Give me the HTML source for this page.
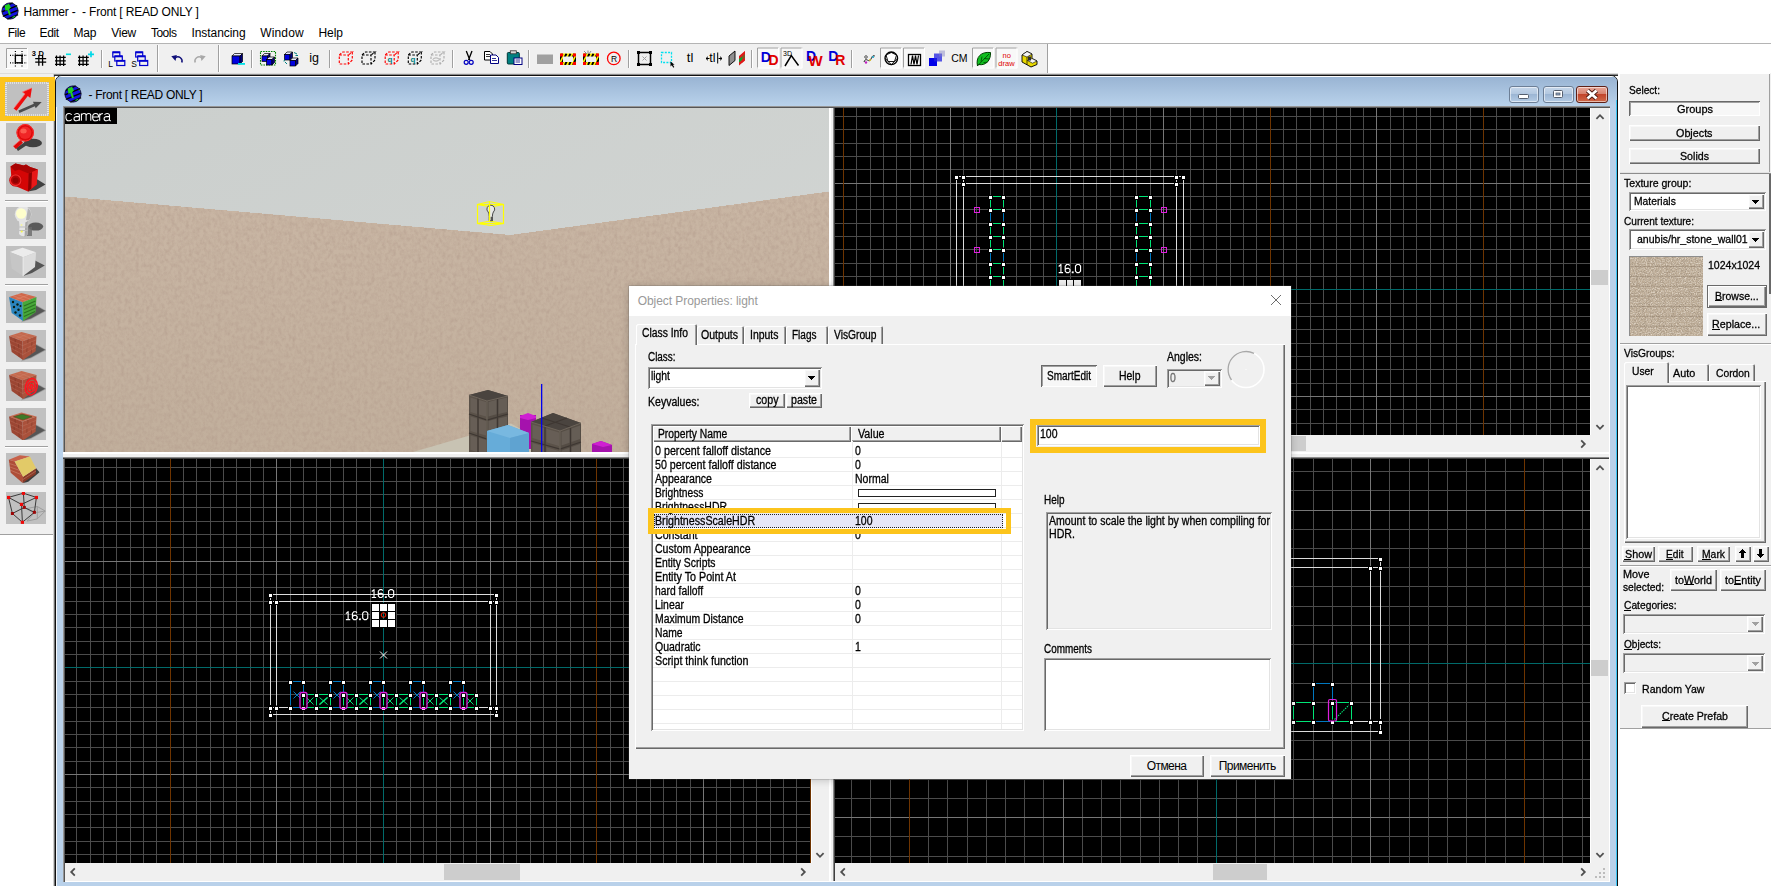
<!DOCTYPE html><html><head><meta charset="utf-8"><title>Hammer</title><style>
html,body{margin:0;padding:0}
body{width:1771px;height:886px;overflow:hidden;background:#fff;position:relative;font-family:"Liberation Sans",sans-serif;font-size:11px;color:#000}
.a{position:absolute;display:block}
.t{position:absolute;white-space:pre;font-family:"Liberation Sans",sans-serif}
.btn{background:#f0f0f0;box-shadow:inset 1px 1px 0 #fff, inset -1px -1px 0 #696969, inset -2px -2px 0 #a0a0a0, inset 2px 2px 0 #f8f8f8}
.btn.dflt{box-shadow:inset 0 0 0 1px #696969, inset 2px 2px 0 #fff, inset -2px -2px 0 #696969, inset -3px -3px 0 #a0a0a0}
.btnp{background:#f7f7f7;box-shadow:inset 1px 1px 0 #696969, inset -1px -1px 0 #fff, inset 2px 2px 0 #a0a0a0}
.sunk{box-shadow:inset 1px 1px 0 #a0a0a0, inset -1px -1px 0 #fff, inset 2px 2px 0 #696969, inset -2px -2px 0 #e3e3e3}
</style></head><body>
<svg class="a" style="left:1px;top:1.8px" width="18" height="18" viewBox="-10 -10 20 20">
<circle r="9" fill="#1414e0"/>
<path d="M-8 -4L3 -9 M-9 1L8 -6 M-8 6L9 -1 M-3 9L9 4" stroke="#000" stroke-width="1.6" fill="none"/>
<path d="M-6 -6L-1 -8L1 -4L-1 -2L1 4L-1 5L-3 -1L-5 0Z" fill="#20d020"/>
<path d="M2 7L6 5L5 8Z M6 -7L8 -4L7 -3Z" fill="#20d020"/>
<circle r="9" fill="none" stroke="#101030" stroke-width="1"/>
</svg>
<div class="t" style="left:23.6px;top:5px;font-size:12px;line-height:14px;color:#000;letter-spacing:-0.163px;">Hammer -  - Front [ READ ONLY ]</div>
<div class="t" style="left:7.7px;top:25.5px;font-size:12px;line-height:14px;color:#000;letter-spacing:-0.459px;">File</div>
<div class="t" style="left:39.5px;top:25.5px;font-size:12px;line-height:14px;color:#000;letter-spacing:-0.344px;">Edit</div>
<div class="t" style="left:73.5px;top:25.5px;font-size:12px;line-height:14px;color:#000;letter-spacing:-0.181px;">Map</div>
<div class="t" style="left:111.2px;top:25.5px;font-size:12px;line-height:14px;color:#000;letter-spacing:-0.248px;">View</div>
<div class="t" style="left:150.9px;top:25.5px;font-size:12px;line-height:14px;color:#000;letter-spacing:-0.502px;">Tools</div>
<div class="t" style="left:191.4px;top:25.5px;font-size:12px;line-height:14px;color:#000;letter-spacing:-0.050px;">Instancing</div>
<div class="t" style="left:260.2px;top:25.5px;font-size:12px;line-height:14px;color:#000;letter-spacing:0.170px;">Window</div>
<div class="t" style="left:318.5px;top:25.5px;font-size:12px;line-height:14px;color:#000;letter-spacing:-0.070px;">Help</div>
<div class="a" style="left:0px;top:43px;width:1771px;height:1px;background:#b4b4b4;"></div>
<div class="a" style="left:0px;top:44px;width:1047px;height:29px;background:#f0f0f0;"></div>
<div class="a" style="left:1047px;top:44px;width:1px;height:29px;background:#a0a0a0;"></div>
<div class="a" style="left:0px;top:73px;width:1771px;height:1px;background:#ffffff;"></div>
<svg class="a" style="left:0;top:44px" width="1048" height="29" viewBox="0 44 1048 29" font-family="Liberation Sans">
<rect x="101" y="50" width="1" height="18" fill="#a0a0a0"/><rect x="102" y="50" width="1" height="18" fill="#fff"/>
<rect x="157" y="45" width="1" height="27" fill="#a0a0a0"/><rect x="158" y="45" width="1" height="27" fill="#fff"/>
<rect x="218" y="45" width="1" height="27" fill="#a0a0a0"/><rect x="219" y="45" width="1" height="27" fill="#fff"/>
<rect x="251" y="50" width="1" height="18" fill="#a0a0a0"/><rect x="252" y="50" width="1" height="18" fill="#fff"/>
<rect x="329" y="50" width="1" height="18" fill="#a0a0a0"/><rect x="330" y="50" width="1" height="18" fill="#fff"/>
<rect x="452" y="50" width="1" height="18" fill="#a0a0a0"/><rect x="453" y="50" width="1" height="18" fill="#fff"/>
<rect x="528" y="50" width="1" height="18" fill="#a0a0a0"/><rect x="529" y="50" width="1" height="18" fill="#fff"/>
<rect x="628" y="50" width="1" height="18" fill="#a0a0a0"/><rect x="629" y="50" width="1" height="18" fill="#fff"/>
<rect x="751" y="50" width="1" height="18" fill="#a0a0a0"/><rect x="752" y="50" width="1" height="18" fill="#fff"/>
<rect x="851" y="50" width="1" height="18" fill="#a0a0a0"/><rect x="852" y="50" width="1" height="18" fill="#fff"/>
<rect x="6" y="48" width="22" height="21" fill="#f8f8f8"/><path d="M6.5 69V48.5H28" stroke="#a0a0a0" fill="none"/><path d="M27.5 48V68.5H6" stroke="#fff" fill="none"/>
<path d="M15.4 51V67M22 51V67M10 55.4H27M10 62.800H27" stroke="#000" stroke-width="1.2" stroke-dasharray="1 1.4" fill="none"/><rect x="15.4" y="55.4" width="6.600" height="7.400" fill="none" stroke="#000" stroke-width="1.3"/>
<text x="31.8" y="56.3" font-size="7.5" font-weight="bold" fill="#000" textLength="12">3D</text><path d="M38.83 55V65.7M35.2 58.531H46.2M42.57 55V65.7M35.2 62.169H46.2" stroke="#000" stroke-width="1.3" fill="none"/>
<path d="M56.512 55.4V66.1M55 57.398H65.8M60.076 55.4V66.1M55 60.929H65.8M63.64 55.4V66.1M55 64.46H65.8" stroke="#000" stroke-width="1.25" fill="none"/><rect x="66" y="53.5" width="5" height="1.6" fill="#00e0e0"/>
<path d="M79.512 55.4V66.1M78 57.398H88.8M83.076 55.4V66.1M78 60.929H88.8M86.64 55.4V66.1M78 64.46H88.8" stroke="#000" stroke-width="1.25" fill="none"/><path d="M88 54.3H94M91 51.3V57.3" stroke="#00d8e8" stroke-width="1.7"/>
<text x="108.3" y="66.5" font-size="8.5" fill="#000">L</text>
<g fill="#f0f0f0" stroke="#0000d0" stroke-width="1.2"><rect x="112.8" y="52" width="7" height="5"/><rect x="114.8" y="56" width="7.5" height="5"/><rect x="116.8" y="60.500" width="8" height="5"/></g>
<rect x="112.8" y="51.5" width="7" height="1.8" fill="#0000d0"/><rect x="114.8" y="55.5" width="7.5" height="1.8" fill="#0000d0"/><rect x="116.8" y="60" width="8" height="1.8" fill="#0000d0"/>
<text x="131.2" y="66.5" font-size="8.5" fill="#000">S</text>
<g fill="#f0f0f0" stroke="#0000d0" stroke-width="1.2"><rect x="135.7" y="52" width="7" height="5"/><rect x="137.7" y="56" width="7.5" height="5"/><rect x="139.7" y="60.500" width="8" height="5"/></g>
<rect x="135.7" y="51.5" width="7" height="1.8" fill="#0000d0"/><rect x="137.7" y="55.5" width="7.5" height="1.8" fill="#0000d0"/><rect x="139.7" y="60" width="8" height="1.8" fill="#0000d0"/>
<path d="M181.8 62.5A4.2 4.2 0 0 0 175.5 57.600" fill="none" stroke="#10107a" stroke-width="1.5"/><path d="M171.3 56.300L176.800 55L175.5 61Z" fill="#10107a"/>
<path d="M195.2 62.5A4.2 4.2 0 0 1 201.5 57.600" fill="none" stroke="#a8a8a8" stroke-width="1.5"/><path d="M205.700 56.300L200.200 55L201.5 61Z" fill="#a8a8a8"/>
<polygon points="232,56 234.5,53.5 242.5,53.5 240,56" fill="#e8e8ff" stroke="#000" stroke-width=".7"/><rect x="232" y="56" width="8" height="8" fill="#0000e0" stroke="#000" stroke-width=".7"/><polygon points="240,56 242.5,53.5 242.5,61.5 240,64" fill="#000080" stroke="#000" stroke-width=".7"/><rect x="238" y="63" width="7" height="1.800" fill="#00e0e8"/>
<rect x="260.500" y="51.5" width="15" height="13.500" fill="none" stroke="#008000" stroke-width="1.1" stroke-dasharray="1.6 1"/><polygon points="262,56 264.5,53.5 270,53.5 267.5,56" fill="#e8e8ff" stroke="#000" stroke-width=".7"/><rect x="262" y="56" width="5.5" height="5.5" fill="#0000e0" stroke="#000" stroke-width=".7"/><polygon points="267.5,56 270,53.5 270,59 267.5,61.5" fill="#000080" stroke="#000" stroke-width=".7"/><polygon points="266.5,59.5 269,57 274.5,57 272,59.5" fill="#e8e8ff" stroke="#000" stroke-width=".7"/><rect x="266.5" y="59.5" width="5.5" height="5.5" fill="#0000e0" stroke="#000" stroke-width=".7"/><polygon points="272,59.5 274.5,57 274.5,62.5 272,65" fill="#000080" stroke="#000" stroke-width=".7"/>
<polygon points="284.5,54.5 287,52 292.5,52 290,54.5" fill="#e8e8ff" stroke="#000" stroke-width=".7"/><rect x="284.5" y="54.5" width="5.5" height="5.5" fill="#0000e0" stroke="#000" stroke-width=".7"/><polygon points="290,54.5 292.5,52 292.5,57.5 290,60" fill="#000080" stroke="#000" stroke-width=".7"/><polygon points="290,60.5 292.5,58 298,58 295.5,60.5" fill="#e8e8ff" stroke="#000" stroke-width=".7"/><rect x="290" y="60.5" width="5.5" height="5.5" fill="#0000e0" stroke="#000" stroke-width=".7"/><polygon points="295.5,60.5 298,58 298,63.5 295.5,66" fill="#000080" stroke="#000" stroke-width=".7"/><path d="M294 52.500l3 1.500M295.500 55.500l2.500 0M285 62l2 2M284.500 59.500l-0.500 2" stroke="#008080" stroke-width="1"/>
<text x="309.300" y="62.400" font-size="12.500" fill="#000">ig</text>
<g fill="none" stroke="#ff0000" stroke-width="1.15" stroke-dasharray="2.6 1.4" opacity="1"><path d="M339.3 55H348.3V64H339.3Z"/><path d="M339.3 55L342.8 52H352.3L348.3 55M352.3 52V60L348.3 64"/></g>
<g fill="none" stroke="#000" stroke-width="1.15" stroke-dasharray="2.6 1.4" opacity="1"><path d="M362 55H371V64H362Z"/><path d="M362 55L365.5 52H375L371 55M375 52V60L371 64"/></g>
<g fill="none" stroke="#ff0000" stroke-width="1.15" stroke-dasharray="2.6 1.4" opacity="1"><path d="M385.2 55H394.2V64H385.2Z"/><path d="M385.2 55L388.7 52H398.2L394.2 55M398.2 52V60L394.2 64"/></g><text x="387.4" y="61.5" font-family="Liberation Sans" font-size="8" font-weight="bold" fill="#008080">q</text>
<g fill="none" stroke="#000" stroke-width="1.15" stroke-dasharray="2.6 1.4" opacity="1"><path d="M408.3 55H417.3V64H408.3Z"/><path d="M408.3 55L411.8 52H421.3L417.3 55M421.3 52V60L417.3 64"/></g><text x="410.5" y="61.5" font-family="Liberation Sans" font-size="8" font-weight="bold" fill="#008080">q</text>
<g fill="none" stroke="#a8a8a8" stroke-width="1.15" stroke-dasharray="2.6 1.4" opacity="0.9"><path d="M431 55H440V64H431Z"/><path d="M431 55L434.5 52H444L440 55M444 52V60L440 64"/></g><ellipse cx="436" cy="59.5" rx="3" ry="1.6" fill="none" stroke="#b0b0b0"/>
<path d="M466.3 51L469.800 60M472 51L468.500 60" stroke="#000" stroke-width="1.3" fill="none"/><circle cx="466.200" cy="62.300" r="2" fill="none" stroke="#0000c0" stroke-width="1.2"/><circle cx="471.200" cy="62.300" r="2" fill="none" stroke="#0000c0" stroke-width="1.2"/>
<path d="M484.500 51.5H490L492.500 54V60H484.500Z" fill="#fff" stroke="#000" stroke-width="1"/><path d="M486 54.500H490M486 56.500H491" stroke="#000" stroke-width=".8"/><path d="M490.500 55H496L498.500 57.500V63.500H490.500Z" fill="#fff" stroke="#000080" stroke-width="1"/><path d="M492 58.500H496M492 60.500H497" stroke="#000080" stroke-width=".8"/>
<rect x="507.300" y="52.5" width="12" height="11.500" rx="1" fill="#008080" stroke="#003838" stroke-width="1"/><rect x="510.300" y="50.800" width="6" height="3" fill="#d8d8d8" stroke="#333" stroke-width=".8"/><rect x="514" y="58" width="8" height="6.500" fill="#fff" stroke="#000080" stroke-width="1"/><path d="M515.500 60H520M515.500 62H520" stroke="#000080" stroke-width=".8"/>
<rect x="537" y="54.500" width="16" height="9.5" fill="#a0a0a0"/>
<rect x="560" y="53.5" width="16" height="11.500" fill="#ffee00"/><svg x="560" y="53.5" width="16" height="11.500" viewBox="560 53.5 16 11.500"><path d="M557 65l5.500 -11.500M561 65l5.500 -11.500M565 65l5.500 -11.500M569 65l5.500 -11.500M573 65l5.500 -11.500" stroke="#000" stroke-width="1.900"/></svg><rect x="563" y="56.5" width="10" height="5.500" fill="#f0f0f0"/><rect x="560" y="53.5" width="3" height="3" fill="#ff0000"/><rect x="573" y="53.5" width="3" height="3" fill="#ff0000"/><rect x="560" y="62" width="3" height="3" fill="#ff0000"/><rect x="573" y="62" width="3" height="3" fill="#ff0000"/>
<rect x="583" y="53.5" width="16" height="11.500" fill="#ffee00"/><svg x="583" y="53.5" width="16" height="11.500" viewBox="583 53.5 16 11.500"><path d="M580 65l5.500 -11.500M584 65l5.500 -11.500M588 65l5.500 -11.500M592 65l5.500 -11.500M596 65l5.500 -11.500" stroke="#000" stroke-width="1.900"/></svg><rect x="586" y="56.5" width="10" height="5.500" fill="#f0f0f0"/><rect x="583" y="53.5" width="3" height="3" fill="#ff0000"/><rect x="596" y="53.5" width="3" height="3" fill="#ff0000"/><rect x="583" y="62" width="3" height="3" fill="#ff0000"/><rect x="596" y="62" width="3" height="3" fill="#ff0000"/><path d="M584 51l3 3M588 50.500v3M591 51l-2 3" stroke="#808080" stroke-width=".9"/>
<circle cx="613.800" cy="58.400" r="6.300" fill="none" stroke="#ff0000" stroke-width="1.300"/><text x="610.900" y="61.800" font-size="8.500" fill="#000">R</text>
<rect x="638.500" y="52.500" width="12" height="12" fill="none" stroke="#000" stroke-width="1.5"/><path d="M642.5 56.500l4 4m0 -4l-4 4" stroke="#a0a0a0" stroke-width="1"/>
<rect x="637" y="51" width="3" height="3" fill="#000"/>
<rect x="649" y="51" width="3" height="3" fill="#000"/>
<rect x="637" y="63" width="3" height="3" fill="#000"/>
<rect x="649" y="63" width="3" height="3" fill="#000"/>
<rect x="661.500" y="52.500" width="10" height="10" fill="none" stroke="#00e0f0" stroke-width="1.300" stroke-dasharray="2 1.300"/><path d="M670.500 61.500v5l1.300 -1.300l1.500 2.500l1 -.6l-1.500 -2.400h1.800z" fill="#000"/>
<text x="686.800" y="62.400" font-size="13" fill="#000">tl</text>
<text x="709.300" y="62.400" font-size="12.500" fill="#000">tl</text><path d="M706 58.500h3.500m-3.500 0l2 -1.800m-2 1.800l2 1.800 M722 58.500h-3.500m3.500 0l-2 -1.800m2 1.800l-2 1.800 M717.700 52.500v11" stroke="#000" stroke-width="1" fill="none"/>
<polygon points="729,56 735,51 735,60.500 729,65.500" fill="#909090" stroke="#000" stroke-width=".9"/><polygon points="739,56 745,51 745,60.500 739,65.500" fill="#e01818"/><polygon points="739,59 745,54 745,57.500 739,62.500" fill="#10a030"/><polygon points="742,53.500 745,51 745,60.500 742,63" fill="#e01818" opacity=".55"/>
<rect x="757" y="47.5" width="22" height="21" fill="#f8f8f8"/><path d="M757.5 68.5V48H779" stroke="#a0a0a0" fill="none"/><path d="M778.5 47.5V68H757" stroke="#fff" fill="none"/>
<rect x="780.5" y="47.5" width="22" height="21" fill="#f8f8f8"/><path d="M781 68.5V48H802.5" stroke="#a0a0a0" fill="none"/><path d="M802 47.5V68H780.5" stroke="#fff" fill="none"/>
<text x="760.800" y="61.500" font-size="14" font-weight="bold" fill="#0000d8">D</text><text x="768.500" y="64.500" font-size="14" font-weight="bold" fill="#e00000">D</text>
<text x="783" y="56" font-size="7" fill="#000">3D</text><path d="M785 66L791.300 55.500L798.500 65.500" stroke="#000" stroke-width="1.500" fill="none"/>
<text x="806" y="60.500" font-size="14" font-weight="bold" fill="#0000d8">D</text><text x="808.500" y="65.500" font-size="15" font-weight="bold" fill="#e00000">W</text>
<text x="828.300" y="60.500" font-size="14" font-weight="bold" fill="#0000d8">D</text><text x="835.300" y="65" font-size="14" font-weight="bold" fill="#e00000">R</text>
<path d="M864 62c2 -6 5 2 7 -3s3 -3 4 -3" fill="none" stroke="#222" stroke-width="1"/><circle cx="866" cy="57" r="1.300" fill="none" stroke="#333" stroke-width=".8"/><circle cx="866" cy="62.500" r="1.200" fill="#c020c0"/><circle cx="873" cy="57" r="1.100" fill="#20a0c0"/><circle cx="870" cy="60" r="1" fill="#e0c020"/>
<rect x="880" y="47.5" width="22" height="21" fill="#f8f8f8"/><path d="M880.5 68.5V48H902" stroke="#a0a0a0" fill="none"/><path d="M901.5 47.5V68H880" stroke="#fff" fill="none"/>
<circle cx="891.300" cy="58.300" r="6.300" fill="#fff" stroke="#000" stroke-width="1.300"/><path d="M886 55L891.300 52.500L896.500 55L894.500 61.500L888 61.500Z M885.300 58.300L888 61.500M897.300 58.300L894.500 61.500M888 61.500L891.300 64.500L894.500 61.500" fill="none" stroke="#000" stroke-width=".9"/>
<rect x="903" y="47.5" width="22" height="21" fill="#f8f8f8"/><path d="M903.5 68.5V48H925" stroke="#a0a0a0" fill="none"/><path d="M924.5 47.5V68H903" stroke="#fff" fill="none"/>
<rect x="908.500" y="54.500" width="12" height="11" fill="#fff" stroke="#000" stroke-width="1.300"/><path d="M911 64.500L912.500 55.500L914 64.500L915.500 55.500L917 64.500L918.500 55.500" fill="none" stroke="#000" stroke-width="1.200"/>
<rect x="929" y="58" width="8" height="8" fill="#0000e8"/><rect x="934" y="53.500" width="8" height="8" fill="#2020e0" opacity=".75"/><rect x="939" y="50.500" width="6" height="6" fill="#8080c0" opacity=".45"/>
<text x="951.200" y="61.800" font-size="10.500" fill="#000">CM</text>
<rect x="972" y="47.5" width="22" height="21" fill="#f8f8f8"/><path d="M972.5 68.5V48H994" stroke="#a0a0a0" fill="none"/><path d="M993.5 47.5V68H972" stroke="#fff" fill="none"/>
<path d="M977.500 66C975.500 57 981 51.500 990.500 52.500C991 60 986 66 978.500 64.500Z" fill="#10c020" stroke="#004000" stroke-width="1"/><path d="M977.800 65.500L989 54M981 61.500l1 -5M984 58.500l5 .5M983.500 62.500l4 -.3" stroke="#004000" stroke-width=".8" fill="none"/>
<rect x="995.5" y="47.5" width="22" height="21" fill="#f8f8f8"/><path d="M996 68.5V48H1017.5" stroke="#a0a0a0" fill="none"/><path d="M1017 47.5V68H995.5" stroke="#fff" fill="none"/>
<text x="1002.500" y="58" font-size="7.500" fill="#e00000">no</text><text x="998.300" y="65.800" font-size="7.500" fill="#e00000">draw</text>
<polygon points="1022,55 1027,51.500 1032,54 1032,58.500 1037,61 1037,64.500 1031,67 1022,62" fill="#e8d800" stroke="#000" stroke-width=".9"/><polygon points="1022,55 1027,51.500 1032,54 1027,57" fill="#f4f4f4" stroke="#000" stroke-width=".6"/><polygon points="1027.500,60.500 1032,58.500 1037,61 1032.500,63.200" fill="#f4f4f4" stroke="#000" stroke-width=".6"/><path d="M1027 57V64.800" stroke="#000" stroke-width=".7"/><rect x="1028" y="56.500" width="3" height="4" fill="#303030"/>
</svg>
<div class="a" style="left:0px;top:74px;width:53px;height:460px;background:#f0f0f0;"></div>
<div class="a" style="left:53px;top:74px;width:1px;height:812px;background:#d0d0d0;"></div>
<div class="a" style="left:54px;top:75px;width:1px;height:811px;background:#707070;"></div>
<div class="a" style="left:0px;top:534px;width:53px;height:1px;background:#a0a0a0;"></div>
<div class="a" style="left:0px;top:535px;width:53px;height:351px;background:#fff;"></div>
<div class="a" style="left:0px;top:77px;width:55px;height:44px;background:#fcc41c;"></div>
<div class="a" style="left:5px;top:200px;width:43px;height:1px;background:#a0a0a0;"></div>
<div class="a" style="left:5px;top:201px;width:43px;height:1px;background:#fff;"></div>
<div class="a" style="left:5px;top:284px;width:43px;height:1px;background:#a0a0a0;"></div>
<div class="a" style="left:5px;top:285px;width:43px;height:1px;background:#fff;"></div>
<div class="a" style="left:5px;top:446px;width:43px;height:1px;background:#a0a0a0;"></div>
<div class="a" style="left:5px;top:447px;width:43px;height:1px;background:#fff;"></div>
<svg class="a" style="left:5px;top:82px" width="44" height="34" viewBox="0 0 44 34"><rect width="44" height="34" fill="#c0c0c0"/><rect x="1" y="1" width="42" height="32" fill="none" stroke="#fff" stroke-width="1.2" stroke-dasharray="1 1"/><polygon points="13.400,28.500 28.840,21.870 27.970,19.840 36.700,19.900 30.730,26.280 29.860,24.250 14.400,30.900" fill="#4c4c4c"/><polygon points="8.700,26.500 20,11.900 17.450,9.940 26.900,5.900 25.350,16.060 22.800,14.100 11.500,28.700" fill="#ee0c0c"/><path d="M8.700 26.500L20 11.900L17.450 9.940L26.900 5.900" fill="none" stroke="#ff6a6a" stroke-width=".7"/></svg>
<svg class="a" style="left:6px;top:123px" width="40" height="32" viewBox="0 0 40 32"><rect width="40" height="32" fill="#c0c0c0"/><ellipse cx="27" cy="20" rx="9" ry="4.300" fill="#404040" style="filter:blur(.6px)"/><path d="M11 26.500L20 20.500" stroke="#404040" stroke-width="3.500"/><path d="M7.300 23.200L14.500 17L17 19.800L9.800 26Z" fill="#e00808"/><path d="M7.300 23.200L14.500 17" stroke="#ff5050" stroke-width=".8"/><circle cx="19.200" cy="9.800" r="8.700" fill="#dc0a0a"/><circle cx="19.200" cy="9.800" r="6.200" fill="#f02626"/><circle cx="19.200" cy="9.800" r="8.200" fill="none" stroke="#ff3030" stroke-width="1"/><ellipse cx="17.500" cy="8" rx="3.200" ry="2.500" fill="#ff6a5a" opacity=".8"/></svg>
<svg class="a" style="left:6px;top:162px" width="40" height="32" viewBox="0 0 40 32"><rect width="40" height="32" fill="#c0c0c0"/><polygon points="30.700,17 39.500,22.400 30,28 22,29.400" fill="#404040" style="filter:blur(.6px)"/><polygon points="4.500,4.600 9.400,1.400 17.800,3.500 20,2.500 24.100,4.900 31.800,7.400 30.700,22.400 22,29.400 5.900,22.400" fill="#d40606"/><polygon points="4.500,4.600 9.400,1.400 17.800,3.500 20,2.500 24.100,4.900 31.800,7.400 22.500,11.500 13,7.500 9,9" fill="#a80404"/><polygon points="22.500,11.500 31.800,7.400 30.700,22.400 22,29.400" fill="#e81818"/><polygon points="22.500,11.500 26,10 25.300,26.600 22,29.400" fill="#8a0202"/><circle cx="9.600" cy="18.200" r="6.300" fill="#b00404"/><circle cx="9.600" cy="18.200" r="5.300" fill="none" stroke="#f42a2a" stroke-width="1.300"/><circle cx="9.600" cy="18.200" r="2.800" fill="#900202"/></svg>
<svg class="a" style="left:6px;top:207px" width="40" height="32" viewBox="0 0 40 32"><rect width="40" height="32" fill="#c0c0c0"/><ellipse cx="29.700" cy="19.600" rx="7.500" ry="4" fill="#5a5a5a" style="filter:blur(.6px)"/><rect x="21" y="20" width="5" height="9" fill="#6a6a6a" style="filter:blur(.6px)" opacity=".8"/><path d="M13 13.500L22 13.500L21.500 20L22 27Q17.500 31.500 13 27L13.500 20Z" fill="#e6e6e6"/><path d="M19.500 13.500L22 13.500L21.500 20L22 27Q20.500 29.500 18.500 29.800Z" fill="#a8a8a8"/><circle cx="17.100" cy="7.300" r="8.300" fill="#e4e4e4"/><path d="M22 1A8.300 8.300 0 0 1 22.500 13.500L20 13Z" fill="#b4b4b4"/><circle cx="15.200" cy="6.500" r="5.200" fill="#ffffcc"/><path d="M13.300 20H21.600M13.200 23.500H21.800" stroke="#bdbdbd" stroke-width="1"/><circle cx="15.700" cy="24.500" r="1.100" fill="#f4f450"/><circle cx="15.500" cy="18" r="1" fill="#f4f4a0"/></svg>
<svg class="a" style="left:6px;top:246px" width="40" height="32" viewBox="0 0 40 32"><rect width="40" height="32" fill="#c0c0c0"/><polygon points="29,14.500 38.800,19.600 26,27 17.100,30.100" fill="#4c4c4c" style="filter:blur(.6px)" opacity=".92"/><polygon points="3.800,5.900 16.400,1.800 30.100,6.300 17.100,11.200" fill="#ececec"/><polygon points="3.800,5.900 17.100,11.200 17.100,30.100 5.900,22.400" fill="#c6c6c6"/><polygon points="17.100,11.200 30.100,6.300 29,21 17.100,30.100" fill="#dcdcdc"/><path d="M17.100 11.200V30.100" stroke="#f4f4f4" stroke-width=".8"/></svg>
<svg class="a" style="left:6px;top:291px" width="40" height="32" viewBox="0 0 40 32"><rect width="40" height="32" fill="#c0c0c0"/><g transform="translate(0,0)"><polygon points="29.6,14.500 39.200,19.800 25,27.500 17,30" fill="#4a4a4a" style="filter:blur(.6px)" opacity=".9"/><polygon points="29.6,14.500 39.200,19.800 25,27.500 17,30" fill="none" stroke="#6a6a6a" stroke-width="1.5" opacity=".35"/><polygon points="3,6 15.500,2 30.500,6 16.500,11.300" fill="#d0684a"/><polygon points="3,6 16.500,11.300 17,30 5.700,22" fill="#2a84be"/><polygon points="16.500,11.300 30.500,6 29.600,21.200 17,30" fill="#48a83a"/><g fill="#0c1c10"><circle cx="7" cy="11" r="1.200"/><circle cx="11.500" cy="13.500" r="1.200"/><circle cx="8" cy="16" r="1.200"/><circle cx="12.500" cy="18.800" r="1.200"/><circle cx="9.500" cy="21.500" r="1.200"/><circle cx="14" cy="24.500" r="1.200"/><circle cx="14.500" cy="15" r="1"/></g><path d="M18 15L29.500 10M18 18.500L29.500 13.500M18 22L29.500 17M18 25.500L29 20.500" stroke="#2c7422" stroke-width="1.300"/><path d="M7,4.700 20,9.700M11,3.400 24.500,8.200M9.500,8.600 22.500,4" stroke="#e8a088" stroke-width=".6" opacity=".6"/></g></svg>
<svg class="a" style="left:6px;top:330px" width="40" height="32" viewBox="0 0 40 32"><rect width="40" height="32" fill="#c0c0c0"/><g transform="translate(0,0)"><polygon points="29.6,14.500 39.200,19.800 25,27.500 17,30" fill="#4a4a4a" style="filter:blur(.6px)" opacity=".9"/><polygon points="29.6,14.500 39.200,19.800 25,27.500 17,30" fill="none" stroke="#6a6a6a" stroke-width="1.5" opacity=".35"/><polygon points="3,6 15.500,2 30.500,6 16.500,11.300" fill="#c4694e"/><polygon points="3,6 16.500,11.300 17,30 5.700,22" fill="#9c4633"/><polygon points="16.500,11.300 30.500,6 29.600,21.200 17,30" fill="#aa513b"/><g stroke="#d8a08a" stroke-width=".6" opacity=".32" fill="none"><path d="M3.600,10 16.600,15.600 30.200,9.800M4.200,14 16.700,20 30,13.600M5,18 16.800,24.600 29.800,17.400M7,4.700 20,9.700M11,3.400 24.500,8.200M9.500,8.600 22.500,4"/></g><g stroke="#5a2418" stroke-width=".6" opacity=".5" fill="none"><path d="M9,8.500 9.300,12.500M12.500,14 12.800,18.300M8,15.800 8.300,19.700M13,22.500 13.200,27M22,9.500 21.800,13.500M26,11.800 25.700,16M21,17.800 20.800,22.500M25.500,19.500 25.300,23.800"/></g></g></svg>
<svg class="a" style="left:6px;top:369px" width="40" height="32" viewBox="0 0 40 32"><rect width="40" height="32" fill="#c0c0c0"/><g transform="translate(0,0)"><polygon points="29.6,14.500 39.200,19.800 25,27.500 17,30" fill="#4a4a4a" style="filter:blur(.6px)" opacity=".9"/><polygon points="29.6,14.500 39.200,19.800 25,27.500 17,30" fill="none" stroke="#6a6a6a" stroke-width="1.5" opacity=".35"/><polygon points="3,6 15.500,2 30.500,6 16.500,11.300" fill="#c4694e"/><polygon points="3,6 16.500,11.300 17,30 5.700,22" fill="#9c4633"/><polygon points="16.500,11.300 30.500,6 29.600,21.200 17,30" fill="#aa513b"/><g stroke="#d8a08a" stroke-width=".6" opacity=".32" fill="none"><path d="M3.600,10 16.600,15.600 30.200,9.800M4.200,14 16.700,20 30,13.600M5,18 16.800,24.600 29.800,17.400M7,4.700 20,9.700M11,3.400 24.500,8.200M9.500,8.600 22.500,4"/></g><g stroke="#5a2418" stroke-width=".6" opacity=".5" fill="none"><path d="M9,8.500 9.300,12.500M12.500,14 12.800,18.300M8,15.800 8.300,19.700M13,22.500 13.200,27M22,9.500 21.800,13.500M26,11.800 25.700,16M21,17.800 20.800,22.500M25.500,19.500 25.300,23.800"/></g><g fill="none" stroke="#ff1420" stroke-width="1.500"><ellipse cx="25.300" cy="17.800" rx="5.800" ry="8.300" transform="rotate(14 25.300 17.800)"/><ellipse cx="25.300" cy="17.800" rx="3.500" ry="5.200" transform="rotate(14 25.300 17.800)"/><ellipse cx="25.300" cy="17.800" rx="1.300" ry="2.200" transform="rotate(14 25.300 17.800)"/></g></g></svg>
<svg class="a" style="left:6px;top:408px" width="40" height="32" viewBox="0 0 40 32"><rect width="40" height="32" fill="#c0c0c0"/><g transform="translate(0,2.5)"><polygon points="29.6,14.500 39.200,19.800 25,27.500 17,30" fill="#4a4a4a" style="filter:blur(.6px)" opacity=".9"/><polygon points="29.6,14.500 39.200,19.800 25,27.500 17,30" fill="none" stroke="#6a6a6a" stroke-width="1.5" opacity=".35"/><polygon points="3,6 15.500,2 30.500,6 16.500,11.300" fill="#c4694e"/><polygon points="3,6 16.500,11.300 17,30 5.700,22" fill="#9c4633"/><polygon points="16.500,11.300 30.500,6 29.600,21.200 17,30" fill="#aa513b"/><g stroke="#d8a08a" stroke-width=".6" opacity=".32" fill="none"><path d="M3.600,10 16.600,15.600 30.200,9.800M4.200,14 16.700,20 30,13.600M5,18 16.800,24.600 29.800,17.400M7,4.700 20,9.700M11,3.400 24.500,8.200M9.500,8.600 22.500,4"/></g><g stroke="#5a2418" stroke-width=".6" opacity=".5" fill="none"><path d="M9,8.500 9.300,12.500M12.500,14 12.800,18.300M8,15.800 8.300,19.700M13,22.500 13.200,27M22,9.500 21.800,13.500M26,11.800 25.700,16M21,17.800 20.800,22.500M25.500,19.500 25.300,23.800"/></g><polygon points="7.500,6.200 16,3.600 26,6.300 16.800,9.600" fill="#3d7a28"/><polygon points="7.500,6.200 16,3.600 26,6.300 16.800,9.600" fill="none" stroke="#6a3a20" stroke-width=".6"/></g></svg>
<svg class="a" style="left:6px;top:453px" width="40" height="32" viewBox="0 0 40 32"><rect width="40" height="32" fill="#c0c0c0"/><polygon points="30.100,15.200 33.500,19.200 22.200,28.800 16.600,29.900" fill="#3c3c3c" style="filter:blur(.6px)"/><polygon points="2.800,6.800 13.800,2.300 23.900,3.400 8.700,8.500" fill="#c8624a"/><polygon points="2.800,6.800 8.700,8.500 17.100,23.700 16.600,29.900 4.700,19.800" fill="#ae4e38"/><polygon points="17.100,23.700 30.100,15.200 29.900,20.900 16.600,29.900" fill="#8a3a28"/><polygon points="8.700,8.500 23.900,3.400 30.100,15.200 17.100,23.700" fill="#e2ca68"/><path d="M3.300 10.500L11 13M3.800 14L13 17.200M4.300 17.200L15 21.500M17 26.500L30 18" stroke="#e0a890" stroke-width=".6" opacity=".6"/></svg>
<svg class="a" style="left:6px;top:492px" width="40" height="32" viewBox="0 0 40 32"><rect width="40" height="32" fill="#c0c0c0"/><g stroke="#9a9a9a" stroke-width=".9" fill="none"><path d="M20 16.700L31.300 14.500L39.200 19L31.300 26.900L21.100 29.100 M31.300 14.500L31.300 26.900M20 16.700L28 21L39.200 19M28 21L21.100 29.100"/></g><g stroke="#3a3a3a" stroke-width="1" fill="none"><path d="M2.500 5.400L17.400 1.200L30.400 5.400L15.500 12.400Z M2.500 5.400L6.400 21.500L16.400 30.300L28.400 20.300L30.400 5.400 M15.500 12.400L16.400 30.300 M17.400 1.200L18.300 15.400L6.400 21.500M18.300 15.400L28.400 20.300"/></g><g fill="#ee0808"><rect x="1" y="3.900" width="3.200" height="3.200"/><rect x="15.800" y="-0.300" width="3.200" height="3.200"/><rect x="28.800" y="3.900" width="3.200" height="3.200"/><rect x="13.900" y="10.800" width="3.200" height="3.200"/><rect x="14.800" y="28.700" width="3.200" height="3.200"/></g><g fill="#9c0606"><rect x="16.800" y="13.900" width="3" height="3"/><rect x="4.900" y="20" width="3" height="3"/><rect x="26.900" y="18.800" width="3" height="3"/></g></svg>
<div class="a" style="left:0px;top:73px;width:1771px;height:1px;background:#dcdcdc;"></div>
<div class="a" style="left:54px;top:74px;width:1564px;height:1px;background:#8a8a8a;"></div>
<div class="a" style="left:54px;top:75px;width:1564px;height:1px;background:#2a2a2a;"></div>
<div class="a" style="left:55px;top:75px;width:1563px;height:820px;background:#b9d1ea;border:1px solid #111;border-radius:7px 7px 0 0;box-sizing:border-box"></div>
<div class="a" style="left:56px;top:76px;width:1561px;height:31px;border-radius:6px 6px 0 0;background:linear-gradient(#fff 0,#fff 1px,#99b4d3 1px,#b9d2eb 30px);"></div>
<div class="a" style="left:56px;top:107px;width:1px;height:779px;background:#ffffff;opacity:.85"></div>
<div class="a" style="left:1616px;top:100px;width:1px;height:786px;background:#3cc6f5;"></div>
<svg class="a" style="left:64px;top:84.8px" width="18" height="18" viewBox="-10 -10 20 20">
<circle r="9" fill="#1414e0"/>
<path d="M-8 -4L3 -9 M-9 1L8 -6 M-8 6L9 -1 M-3 9L9 4" stroke="#000" stroke-width="1.6" fill="none"/>
<path d="M-6 -6L-1 -8L1 -4L-1 -2L1 4L-1 5L-3 -1L-5 0Z" fill="#20d020"/>
<path d="M2 7L6 5L5 8Z M6 -7L8 -4L7 -3Z" fill="#20d020"/>
<circle r="9" fill="none" stroke="#101030" stroke-width="1"/>
</svg>
<div class="t" style="left:88.6px;top:87.8px;font-size:12px;line-height:14px;color:#000;letter-spacing:-0.312px;">- Front [ READ ONLY ]</div>
<div class="a" style="left:1508.6px;top:85.5px;width:30.6px;height:17px;background:linear-gradient(#c6d7ea 0,#b3c8e0 45%,#9cb6d4 50%,#b4cbe4 100%);border:1px solid #6d7f96;border-radius:3px;box-sizing:border-box;box-shadow:inset 0 0 0 1px rgba(255,255,255,.55)"></div>
<div class="a" style="left:1542.6px;top:85.5px;width:31px;height:17px;background:linear-gradient(#c6d7ea 0,#b3c8e0 45%,#9cb6d4 50%,#b4cbe4 100%);border:1px solid #6d7f96;border-radius:3px;box-sizing:border-box;box-shadow:inset 0 0 0 1px rgba(255,255,255,.55)"></div>
<div class="a" style="left:1576.4px;top:85.5px;width:31.4px;height:17px;background:linear-gradient(#e9a99b 0,#d7836f 45%,#c2452b 50%,#cf6a4a 100%);border:1px solid #5e2016;border-radius:3px;box-sizing:border-box;box-shadow:inset 0 0 0 1px rgba(255,255,255,.55)"></div>
<svg class="a" style="left:1508px;top:85px" width="102" height="18" viewBox="1508 85 102 18">
<rect x="1518.5" y="94.5" width="10" height="4" rx="1" fill="#fff" stroke="#555f6e" stroke-width="1"/>
<rect x="1553.5" y="90.5" width="9" height="7" rx="1" fill="#fff" stroke="#555f6e" stroke-width="1"/><rect x="1556" y="93" width="4" height="2" fill="#8fa6c4" stroke="#555f6e" stroke-width=".8"/>
<path d="M1587.5 90.5L1596.5 98.5M1596.5 90.5L1587.5 98.5" stroke="#4a1a12" stroke-width="4.6" stroke-linecap="butt"/><path d="M1587.5 90.5L1596.5 98.5M1596.5 90.5L1587.5 98.5" stroke="#fff" stroke-width="2.8"/>
</svg>
<div class="a" style="left:63px;top:106px;width:1547px;height:776px;background:#959595;"></div>
<div class="a" style="left:64px;top:107px;width:1546px;height:775px;background:#555555;"></div>
<div class="a" style="left:65px;top:108px;width:1544px;height:773px;background:#f0f0f0;"></div>
<div class="a" style="left:1609px;top:108px;width:1px;height:773px;background:#fff;"></div>
<div class="a" style="left:65px;top:881px;width:1545px;height:1px;background:#fff;"></div>
<div class="a" style="left:63px;top:452px;width:1546px;height:7px;background:linear-gradient(#fff 0,#fff 2px,#f0f0f0 2px,#f0f0f0 5px,#8a8a8a 5px,#8a8a8a 6px,#404040 6px);"></div>
<div class="a" style="left:829px;top:108px;width:6px;height:773px;background:linear-gradient(90deg,#fff 0,#fff 2px,#f0f0f0 2px,#f0f0f0 4px,#8a8a8a 4px,#8a8a8a 5px,#404040 5px);"></div>
<svg class="a" style="left:1593.5px;top:111px" width="12" height="12" viewBox="-6 -6 12 12"><path d="M-3.6 1.8L0 -1.8L3.6 1.8" stroke="#505050" stroke-width="1.8" fill="none"/></svg>
<svg class="a" style="left:1593.5px;top:420.5px" width="12" height="12" viewBox="-6 -6 12 12"><path d="M-3.6 -1.8L0 1.8L3.6 -1.8" stroke="#505050" stroke-width="1.8" fill="none"/></svg>
<svg class="a" style="left:1576.5px;top:437.5px" width="12" height="12" viewBox="-6 -6 12 12"><path d="M-1.8 -3.6L1.8 0L-1.8 3.6" stroke="#505050" stroke-width="1.8" fill="none"/></svg>
<div class="a" style="left:1591px;top:270px;width:17px;height:15px;background:#cdcdcd;"></div>
<div class="a" style="left:1291px;top:436px;width:15px;height:15px;background:#cdcdcd;"></div>
<svg class="a" style="left:1593.5px;top:462px" width="12" height="12" viewBox="-6 -6 12 12"><path d="M-3.6 1.8L0 -1.8L3.6 1.8" stroke="#505050" stroke-width="1.8" fill="none"/></svg>
<svg class="a" style="left:1593.5px;top:848.5px" width="12" height="12" viewBox="-6 -6 12 12"><path d="M-3.6 -1.8L0 1.8L3.6 -1.8" stroke="#505050" stroke-width="1.8" fill="none"/></svg>
<svg class="a" style="left:837.3px;top:865.5px" width="12" height="12" viewBox="-6 -6 12 12"><path d="M1.8 -3.6L-1.8 0L1.8 3.6" stroke="#505050" stroke-width="1.8" fill="none"/></svg>
<svg class="a" style="left:1576.5px;top:865.5px" width="12" height="12" viewBox="-6 -6 12 12"><path d="M-1.8 -3.6L1.8 0L-1.8 3.6" stroke="#505050" stroke-width="1.8" fill="none"/></svg>
<div class="a" style="left:1591px;top:660px;width:17px;height:16px;background:#cdcdcd;"></div>
<div class="a" style="left:1213px;top:864px;width:54px;height:16px;background:#cdcdcd;"></div>
<svg class="a" style="left:66.5px;top:865.5px" width="12" height="12" viewBox="-6 -6 12 12"><path d="M1.8 -3.6L-1.8 0L1.8 3.6" stroke="#505050" stroke-width="1.8" fill="none"/></svg>
<svg class="a" style="left:796.7px;top:865.5px" width="12" height="12" viewBox="-6 -6 12 12"><path d="M-1.8 -3.6L1.8 0L-1.8 3.6" stroke="#505050" stroke-width="1.8" fill="none"/></svg>
<svg class="a" style="left:813.5px;top:462px" width="12" height="12" viewBox="-6 -6 12 12"><path d="M-3.6 1.8L0 -1.8L3.6 1.8" stroke="#505050" stroke-width="1.8" fill="none"/></svg>
<svg class="a" style="left:813.5px;top:848.5px" width="12" height="12" viewBox="-6 -6 12 12"><path d="M-3.6 -1.8L0 1.8L3.6 -1.8" stroke="#505050" stroke-width="1.8" fill="none"/></svg>
<div class="a" style="left:444px;top:864px;width:76px;height:16px;background:#cdcdcd;"></div>
<div class="a" style="left:1590px;top:108px;width:1px;height:327px;background:#fff;"></div>
<div class="a" style="left:1590px;top:459px;width:1px;height:404px;background:#fff;"></div>
<div class="a" style="left:811px;top:459px;width:1px;height:404px;background:#fff;"></div>
<svg class="a" style="left:1594px;top:867px" width="14" height="14" viewBox="0 0 14 14"><g fill="#bcbcbc"><rect x="9" y="1" width="2" height="2"/><rect x="5" y="5" width="2" height="2"/><rect x="9" y="5" width="2" height="2"/><rect x="1" y="9" width="2" height="2"/><rect x="5" y="9" width="2" height="2"/><rect x="9" y="9" width="2" height="2"/></g></svg>
<svg class="a" style="left:65px;top:108px" width="764" height="344" viewBox="65 108 764 344">
<defs><linearGradient id="sky" x1="0" y1="0" x2="1" y2="1"><stop offset="0" stop-color="#cbcfcd"/><stop offset="1" stop-color="#d3d6d4"/></linearGradient>
<linearGradient id="wallL" x1="0" y1="0" x2="0" y2="1"><stop offset="0" stop-color="#c9b6a4"/><stop offset="1" stop-color="#c1af9c"/></linearGradient>
<linearGradient id="wallR" x1="0" y1="0" x2="0" y2="1"><stop offset="0" stop-color="#c9b6a4"/><stop offset="1" stop-color="#c1af9c"/></linearGradient>
<filter id="nz" x="0" y="0" width="100%" height="100%"><feTurbulence type="fractalNoise" baseFrequency="0.28 0.22" numOctaves="3" seed="7"/><feColorMatrix values="0 0 0 0 0.42  0 0 0 0 0.30  0 0 0 0 0.24  1.2 1.2 0 0 -0.98"/></filter>
<filter id="nz2" x="0" y="0" width="100%" height="100%"><feTurbulence type="fractalNoise" baseFrequency="0.35" numOctaves="2" seed="3"/><feColorMatrix values="0 0 0 0 0.2  0 0 0 0 0.17  0 0 0 0 0.15  0 0.6 0 0 -0.12"/></filter>
</defs>
<rect x="65" y="108" width="764" height="344" fill="url(#sky)"/>
<polygon points="65,196.5 510.5,235 829,191.5 829,452 65,452" fill="url(#wallL)" shape-rendering="crispEdges"/>
<clipPath id="wc"><polygon points="65,196.5 510.5,235 829,191.5 829,452 65,452"/></clipPath>
<g clip-path="url(#wc)"><rect x="65" y="190" width="764" height="262" filter="url(#nz)" opacity=".5"/></g>
<polygon points="413,452 511,423.5 540,440 560,452" fill="#c8c3b3"/>
<polygon points="469,395 488,390 508,396 508,452 469,452" fill="#5b5249"/>
<polygon points="469,395 488,390 508,396 487,401" fill="#4a443f"/>
<polygon points="487,401 508,396 508,452 487,452" fill="#544c44"/>
<path d="M469 414L487 420L508 414 M469 433L487 439L508 433 M478 398V452 M497.5 399V452" stroke="#3e3732" stroke-width="1.2" fill="none"/>
<path d="M469 395L487 401L508 396M487 401V452" stroke="#6d645a" stroke-width="1" fill="none"/>
<polygon points="470.5,397.5 477,399.5 477,414 470.5,412" fill="#6b635b" opacity=".75"/>
<polygon points="470.5,416.5 477,418.5 477,433 470.5,431" fill="#6b635b" opacity=".75"/>
<polygon points="470.5,435.5 477,437.5 477,452 470.5,450" fill="#6b635b" opacity=".75"/>
<polygon points="479,400 486,402 486,416.5 479,414.5" fill="#6b635b" opacity=".75"/>
<polygon points="479,419 486,421 486,435.5 479,433.5" fill="#6b635b" opacity=".75"/>
<polygon points="479,438 486,440 486,454.5 479,452.5" fill="#6b635b" opacity=".75"/>
<polygon points="488.5,402 496.5,399.8 496.5,414.3 488.5,416.5" fill="#6b635b" opacity=".75"/>
<polygon points="488.5,421 496.5,418.8 496.5,433.3 488.5,435.5" fill="#6b635b" opacity=".75"/>
<polygon points="488.5,440 496.5,437.8 496.5,452.3 488.5,454.5" fill="#6b635b" opacity=".75"/>
<polygon points="498.5,399.5 507,397.5 507,412 498.5,414" fill="#6b635b" opacity=".75"/>
<polygon points="498.5,418.5 507,416.5 507,431 498.5,433" fill="#6b635b" opacity=".75"/>
<polygon points="498.5,437.5 507,435.5 507,450 498.5,452" fill="#6b635b" opacity=".75"/>
<rect x="520" y="415" width="16" height="34" fill="#a512ad"/><polygon points="520,416 528,413 536,416 536,418 528,420 520,418" fill="#cf1fd2"/>
<polygon points="487,431 508,425 529,433 529,452 487,452" fill="#66acd9"/><polygon points="487,431 508,425 529,433 510,438" fill="#78b8e0"/><polygon points="510,438 529,433 529,452 510,452" fill="#5fa3d1"/>
<polygon points="531,422 553,413 581,423 581,452 531,452" fill="#5b5249"/>
<polygon points="531,422 553,413 581,423 560,431" fill="#4a443f"/>
<polygon points="560,431 581,423 581,452 560,452" fill="#544c44"/>
<path d="M531 441L560 449L581 442 M545 426V452 M570.5 428V452 M542 418L570 427 M567 418L545 426" stroke="#3e3732" stroke-width="1.2" fill="none"/>
<path d="M531 422L560 431L581 423M560 431V452" stroke="#6d645a" stroke-width="1" fill="none"/>
<polygon points="532.5,424.5 544,428 544,441.5 532.5,438" fill="#6b635b" opacity=".75"/>
<polygon points="532.5,443 544,446.5 544,460 532.5,456.5" fill="#6b635b" opacity=".75"/>
<polygon points="546.5,428.8 559,432.5 559,446 546.5,442.3" fill="#6b635b" opacity=".75"/>
<polygon points="546.5,447.3 559,451 559,464.5 546.5,460.8" fill="#6b635b" opacity=".75"/>
<polygon points="561.5,432 569.5,429.2 569.5,442.7 561.5,445.5" fill="#6b635b" opacity=".75"/>
<polygon points="561.5,450.5 569.5,447.7 569.5,461.2 561.5,464" fill="#6b635b" opacity=".75"/>
<polygon points="571.5,428.5 580,425.5 580,439 571.5,442" fill="#6b635b" opacity=".75"/>
<polygon points="571.5,447 580,444 580,457.5 571.5,460.5" fill="#6b635b" opacity=".75"/>
<rect x="541" y="384" width="1.3" height="68" fill="#0000ee"/>
<polygon points="592,444 601,441 612,445 612,452 592,452" fill="#a512ad"/><polygon points="592,444 601,441 612,445 603,447" fill="#cf1fd2"/>
<g fill="none" stroke="#ffff00" stroke-width="1.2"><rect x="477.5" y="204.5" width="26" height="19"/><path d="M477.5 204.5L489.5 201.5L503.5 204.5L491 207 Z M477.5 223.5L489.5 221L503.5 223.5L491 225.5Z M489.5 201V222"/></g>
<path d="M490.8 205.2a3.9 3.9 0 0 1 2.6 6.8q-1 1.6 -1 4.5v4.2h-3.2v-4.2q0 -2.9 -1 -4.5a3.9 3.9 0 0 1 2.6 -6.8z" fill="#e8e8e8" stroke="#3a3a3a" stroke-width=".9"/>
<rect x="490.6" y="216.8" width="2.4" height="4.2" fill="#555"/>
<path d="M489.5 201V222" stroke="#ffff00" stroke-width="1.2"/>
</svg>
<div class="a" style="left:65px;top:108px;width:52px;height:16px;background:#000;"></div>
<svg class="a" style="left:65px;top:108px" width="52" height="16" viewBox="65 108 52 16"><g fill="none" stroke="#fff" stroke-width="1.05" stroke-linejoin="round"><path transform="translate(65.9,113.5)" d="M5.8 1.3Q4.8 0 3.2 0Q0 0 0 3.65Q0 7.3 3.2 7.3Q4.8 7.3 5.8 6"/><path transform="translate(74,113.5)" d="M0.4 1.3Q1.4 0 3 0Q5.4 0 5.4 2V7.3M5.4 3.1H2.6Q0 3.1 0 5.2Q0 7.3 2.4 7.3Q4.4 7.3 5.4 5.8"/><path transform="translate(81.4,113.5)" d="M0 0V7.3M0 1.6Q1 0 2.600 0Q4.7 0 4.7 2V7.3M4.7 1.6Q5.7 0 7.3 0Q9.4 0 9.4 2V7.3"/><path transform="translate(92.6,113.5)" d="M0 3.4H6Q6 0 3.1 0Q0 0 0 3.65Q0 7.3 3.2 7.3Q5 7.3 5.8 5.900"/><path transform="translate(99.7,113.5)" d="M0 0V7.3M0 2Q1 0 3.2 0"/><path transform="translate(104.1,113.5)" d="M0.4 1.3Q1.4 0 3 0Q5.4 0 5.4 2V6.500Q5.400 7.300 6.800 7.200M5.4 3.1H2.6Q0 3.1 0 5.2Q0 7.3 2.4 7.3Q4.4 7.3 5.4 5.8"/></g></svg>
<svg class="a" style="left:835px;top:108px;" width="755" height="327" viewBox="835 108 755 327" shape-rendering="crispEdges">
<rect x="835" y="108" width="755" height="327" fill="#000"/>
<path transform="translate(0.5,0)" d="M856 108V435M870 108V435M883 108V435M896 108V435M910 108V435M923 108V435M936 108V435M963 108V435M976 108V435M990 108V435M1003 108V435M1016 108V435M1030 108V435M1043 108V435M1070 108V435M1083 108V435M1096 108V435M1110 108V435M1123 108V435M1136 108V435M1150 108V435M1176 108V435M1190 108V435M1203 108V435M1216 108V435M1230 108V435M1243 108V435M1256 108V435M1283 108V435M1296 108V435M1310 108V435M1323 108V435M1336 108V435M1350 108V435M1363 108V435M1390 108V435M1403 108V435M1416 108V435M1430 108V435M1443 108V435M1456 108V435M1470 108V435M1496 108V435M1510 108V435M1523 108V435M1536 108V435M1550 108V435M1563 108V435M1576 108V435" stroke="#4b4b4b" stroke-width="1" fill="none"/>
<path transform="translate(0,0.5)" d="M835 116H1590M835 129H1590M835 143H1590M835 156H1590M835 169H1590M835 196H1590M835 209H1590M835 223H1590M835 236H1590M835 249H1590M835 263H1590M835 276H1590M835 303H1590M835 316H1590M835 329H1590M835 343H1590M835 356H1590M835 369H1590M835 383H1590M835 409H1590M835 423H1590" stroke="#4b4b4b" stroke-width="1" fill="none"/>
<path transform="translate(0.5,0)" d="M950 108V435M1163 108V435M1376 108V435" stroke="#767676" stroke-width="1" fill="none"/>
<path transform="translate(0,0.5)" d="M835 183H1590M835 396H1590" stroke="#767676" stroke-width="1" fill="none"/>
<path transform="translate(0.5,0)" d="M843 108V435M1270 108V435M1483 108V435" stroke="#6e3400" stroke-width="1" fill="none"/>
<path transform="translate(0.5,0)" d="M1056 108V435" stroke="#006a6a" stroke-width="1" fill="none"/>
<path transform="translate(0,0.5)" d="M835 289H1590" stroke="#006a6a" stroke-width="1" fill="none"/>
<rect x="959" y="176" width="222" height="1" fill="#dcdcdc"/>
<rect x="966" y="183" width="208" height="1" fill="#dcdcdc"/>
<rect x="956" y="180" width="1" height="151" fill="#dcdcdc"/>
<rect x="963" y="187" width="1" height="144" fill="#dcdcdc"/>
<rect x="1176" y="187" width="1" height="144" fill="#dcdcdc"/>
<rect x="1183" y="180" width="1" height="151" fill="#dcdcdc"/>
<rect x="954" y="175" width="5" height="5" fill="#000"/><rect x="955" y="176" width="3" height="3" fill="#fff"/>
<rect x="961" y="175" width="5" height="5" fill="#000"/><rect x="962" y="176" width="3" height="3" fill="#fff"/>
<rect x="961" y="182" width="5" height="5" fill="#000"/><rect x="962" y="183" width="3" height="3" fill="#fff"/>
<rect x="1174" y="175" width="5" height="5" fill="#000"/><rect x="1175" y="176" width="3" height="3" fill="#fff"/>
<rect x="1181" y="175" width="5" height="5" fill="#000"/><rect x="1182" y="176" width="3" height="3" fill="#fff"/>
<rect x="1174" y="182" width="5" height="5" fill="#000"/><rect x="1175" y="183" width="3" height="3" fill="#fff"/>
<rect x="959" y="176" width="2" height="1" fill="#dcdcdc"/><rect x="963" y="180" width="1" height="2" fill="#dcdcdc"/>
<rect x="1179" y="176" width="2" height="1" fill="#dcdcdc"/><rect x="1176" y="180" width="1" height="2" fill="#dcdcdc"/>
<rect x="993" y="196" width="8" height="1" fill="#00e676"/>
<rect x="990" y="200" width="1" height="7" fill="#00e676"/>
<rect x="1003" y="200" width="1" height="7" fill="#00e676"/>
<rect x="993" y="209" width="8" height="1" fill="#00e676"/>
<rect x="990" y="213" width="1" height="8" fill="#0078c0"/>
<rect x="1003" y="213" width="1" height="8" fill="#0078c0"/>
<rect x="993" y="223" width="8" height="1" fill="#00e676"/>
<rect x="990" y="227" width="1" height="7" fill="#00e676"/>
<rect x="1003" y="227" width="1" height="7" fill="#00e676"/>
<rect x="993" y="236" width="8" height="1" fill="#00e676"/>
<rect x="990" y="240" width="1" height="7" fill="#00e676"/>
<rect x="1003" y="240" width="1" height="7" fill="#00e676"/>
<rect x="993" y="249" width="8" height="1" fill="#00e676"/>
<rect x="990" y="253" width="1" height="8" fill="#0078c0"/>
<rect x="1003" y="253" width="1" height="8" fill="#0078c0"/>
<rect x="993" y="263" width="8" height="1" fill="#00e676"/>
<rect x="990" y="267" width="1" height="7" fill="#00e676"/>
<rect x="1003" y="267" width="1" height="7" fill="#00e676"/>
<rect x="993" y="276" width="8" height="1" fill="#00e676"/>
<rect x="990" y="280" width="1" height="7" fill="#00e676"/>
<rect x="1003" y="280" width="1" height="7" fill="#00e676"/>
<rect x="993" y="289" width="8" height="1" fill="#00e676"/>
<rect x="988" y="195" width="5" height="5" fill="#000"/><rect x="989" y="196" width="3" height="3" fill="#fff"/>
<rect x="1001" y="195" width="5" height="5" fill="#000"/><rect x="1002" y="196" width="3" height="3" fill="#fff"/>
<rect x="988" y="208" width="5" height="5" fill="#000"/><rect x="989" y="209" width="3" height="3" fill="#fff"/>
<rect x="1001" y="208" width="5" height="5" fill="#000"/><rect x="1002" y="209" width="3" height="3" fill="#fff"/>
<rect x="988" y="222" width="5" height="5" fill="#000"/><rect x="989" y="223" width="3" height="3" fill="#fff"/>
<rect x="1001" y="222" width="5" height="5" fill="#000"/><rect x="1002" y="223" width="3" height="3" fill="#fff"/>
<rect x="988" y="235" width="5" height="5" fill="#000"/><rect x="989" y="236" width="3" height="3" fill="#fff"/>
<rect x="1001" y="235" width="5" height="5" fill="#000"/><rect x="1002" y="236" width="3" height="3" fill="#fff"/>
<rect x="988" y="248" width="5" height="5" fill="#000"/><rect x="989" y="249" width="3" height="3" fill="#fff"/>
<rect x="1001" y="248" width="5" height="5" fill="#000"/><rect x="1002" y="249" width="3" height="3" fill="#fff"/>
<rect x="988" y="262" width="5" height="5" fill="#000"/><rect x="989" y="263" width="3" height="3" fill="#fff"/>
<rect x="1001" y="262" width="5" height="5" fill="#000"/><rect x="1002" y="263" width="3" height="3" fill="#fff"/>
<rect x="988" y="275" width="5" height="5" fill="#000"/><rect x="989" y="276" width="3" height="3" fill="#fff"/>
<rect x="1001" y="275" width="5" height="5" fill="#000"/><rect x="1002" y="276" width="3" height="3" fill="#fff"/>
<rect x="988" y="288" width="5" height="5" fill="#000"/><rect x="989" y="289" width="3" height="3" fill="#fff"/>
<rect x="1001" y="288" width="5" height="5" fill="#000"/><rect x="1002" y="289" width="3" height="3" fill="#fff"/>
<rect x="1139" y="196" width="9" height="1" fill="#00e676"/>
<rect x="1136" y="200" width="1" height="7" fill="#00e676"/>
<rect x="1150" y="200" width="1" height="7" fill="#00e676"/>
<rect x="1139" y="209" width="9" height="1" fill="#00e676"/>
<rect x="1136" y="213" width="1" height="8" fill="#0078c0"/>
<rect x="1150" y="213" width="1" height="8" fill="#0078c0"/>
<rect x="1139" y="223" width="9" height="1" fill="#00e676"/>
<rect x="1136" y="227" width="1" height="7" fill="#00e676"/>
<rect x="1150" y="227" width="1" height="7" fill="#00e676"/>
<rect x="1139" y="236" width="9" height="1" fill="#00e676"/>
<rect x="1136" y="240" width="1" height="7" fill="#00e676"/>
<rect x="1150" y="240" width="1" height="7" fill="#00e676"/>
<rect x="1139" y="249" width="9" height="1" fill="#00e676"/>
<rect x="1136" y="253" width="1" height="8" fill="#0078c0"/>
<rect x="1150" y="253" width="1" height="8" fill="#0078c0"/>
<rect x="1139" y="263" width="9" height="1" fill="#00e676"/>
<rect x="1136" y="267" width="1" height="7" fill="#00e676"/>
<rect x="1150" y="267" width="1" height="7" fill="#00e676"/>
<rect x="1139" y="276" width="9" height="1" fill="#00e676"/>
<rect x="1136" y="280" width="1" height="7" fill="#00e676"/>
<rect x="1150" y="280" width="1" height="7" fill="#00e676"/>
<rect x="1139" y="289" width="9" height="1" fill="#00e676"/>
<rect x="1134" y="195" width="5" height="5" fill="#000"/><rect x="1135" y="196" width="3" height="3" fill="#fff"/>
<rect x="1148" y="195" width="5" height="5" fill="#000"/><rect x="1149" y="196" width="3" height="3" fill="#fff"/>
<rect x="1134" y="208" width="5" height="5" fill="#000"/><rect x="1135" y="209" width="3" height="3" fill="#fff"/>
<rect x="1148" y="208" width="5" height="5" fill="#000"/><rect x="1149" y="209" width="3" height="3" fill="#fff"/>
<rect x="1134" y="222" width="5" height="5" fill="#000"/><rect x="1135" y="223" width="3" height="3" fill="#fff"/>
<rect x="1148" y="222" width="5" height="5" fill="#000"/><rect x="1149" y="223" width="3" height="3" fill="#fff"/>
<rect x="1134" y="235" width="5" height="5" fill="#000"/><rect x="1135" y="236" width="3" height="3" fill="#fff"/>
<rect x="1148" y="235" width="5" height="5" fill="#000"/><rect x="1149" y="236" width="3" height="3" fill="#fff"/>
<rect x="1134" y="248" width="5" height="5" fill="#000"/><rect x="1135" y="249" width="3" height="3" fill="#fff"/>
<rect x="1148" y="248" width="5" height="5" fill="#000"/><rect x="1149" y="249" width="3" height="3" fill="#fff"/>
<rect x="1134" y="262" width="5" height="5" fill="#000"/><rect x="1135" y="263" width="3" height="3" fill="#fff"/>
<rect x="1148" y="262" width="5" height="5" fill="#000"/><rect x="1149" y="263" width="3" height="3" fill="#fff"/>
<rect x="1134" y="275" width="5" height="5" fill="#000"/><rect x="1135" y="276" width="3" height="3" fill="#fff"/>
<rect x="1148" y="275" width="5" height="5" fill="#000"/><rect x="1149" y="276" width="3" height="3" fill="#fff"/>
<rect x="1134" y="288" width="5" height="5" fill="#000"/><rect x="1135" y="289" width="3" height="3" fill="#fff"/>
<rect x="1148" y="288" width="5" height="5" fill="#000"/><rect x="1149" y="289" width="3" height="3" fill="#fff"/>
<rect x="974.5" y="207" width="5" height="5" fill="none" stroke="#dd1fdd" stroke-width="1"/>
<rect x="974.5" y="247" width="5" height="5" fill="none" stroke="#dd1fdd" stroke-width="1"/>
<rect x="1161.5" y="207" width="5" height="5" fill="none" stroke="#dd1fdd" stroke-width="1"/>
<rect x="1161.5" y="247" width="5" height="5" fill="none" stroke="#dd1fdd" stroke-width="1"/>
<path d="M1058.69 266.49 L1060.94 264.50 L1060.94 272.64M1058.69 272.64 L1063.08 272.64M1069.72 265.59 L1068.75 264.50 L1066.70 264.50 L1065.23 266.13 L1065.23 271.20 L1066.50 272.64 L1068.65 272.64 L1070.01 271.29 L1070.01 269.57 L1068.75 268.39 L1066.70 268.39 L1065.23 269.57M1072.26 271.83 L1073.14 271.83 L1073.14 272.64 L1072.26 272.64 L1072.26 271.83M1076.94 264.50 L1079.09 264.50 L1080.56 265.95 L1080.56 271.20 L1079.09 272.64 L1076.94 272.64 L1075.48 271.20 L1075.48 265.95 L1076.94 264.50" stroke="#fff" stroke-width="1.15" fill="none" shape-rendering="geometricPrecision" stroke-linejoin="round"/>
<rect x="1058" y="279" width="24" height="10" fill="#000"/>
<rect x="1059" y="280" width="7" height="7" fill="#f0f0f0"/>
<rect x="1059" y="288" width="7" height="7" fill="#f0f0f0"/>
<rect x="1059" y="296" width="7" height="7" fill="#f0f0f0"/>
<rect x="1067" y="280" width="6" height="7" fill="#f0f0f0"/>
<rect x="1067" y="296" width="6" height="7" fill="#f0f0f0"/>
<rect x="1074" y="280" width="7" height="7" fill="#f0f0f0"/>
<rect x="1074" y="288" width="7" height="7" fill="#f0f0f0"/>
<rect x="1074" y="296" width="7" height="7" fill="#f0f0f0"/>
</svg>
<svg class="a" style="left:65px;top:459px;" width="746" height="404" viewBox="65 459 746 404" shape-rendering="crispEdges">
<rect x="65" y="459" width="746" height="404" fill="#000"/>
<path transform="translate(0.5,0)" d="M76 459V863M90 459V863M103 459V863M116 459V863M130 459V863M143 459V863M156 459V863M183 459V863M196 459V863M210 459V863M223 459V863M236 459V863M250 459V863M263 459V863M290 459V863M303 459V863M316 459V863M330 459V863M343 459V863M356 459V863M370 459V863M396 459V863M410 459V863M423 459V863M436 459V863M450 459V863M463 459V863M476 459V863M503 459V863M516 459V863M530 459V863M543 459V863M556 459V863M570 459V863M583 459V863M610 459V863M623 459V863M636 459V863M650 459V863M663 459V863M676 459V863M690 459V863M716 459V863M730 459V863M743 459V863M756 459V863M770 459V863M783 459V863M796 459V863" stroke="#4b4b4b" stroke-width="1" fill="none"/>
<path transform="translate(0,0.5)" d="M65 467H811M65 481H811M65 494H811M65 507H811M65 521H811M65 534H811M65 547H811M65 574H811M65 587H811M65 601H811M65 614H811M65 627H811M65 641H811M65 654H811M65 681H811M65 694H811M65 707H811M65 721H811M65 734H811M65 747H811M65 761H811M65 787H811M65 801H811M65 814H811M65 827H811M65 841H811M65 854H811" stroke="#4b4b4b" stroke-width="1" fill="none"/>
<path transform="translate(0.5,0)" d="M276 459V863M490 459V863M703 459V863" stroke="#767676" stroke-width="1" fill="none"/>
<path transform="translate(0,0.5)" d="M65 561H811M65 774H811" stroke="#767676" stroke-width="1" fill="none"/>
<path transform="translate(0.5,0)" d="M170 459V863M596 459V863M810 459V863" stroke="#6e3400" stroke-width="1" fill="none"/>
<path transform="translate(0.5,0)" d="M383 459V863" stroke="#006a6a" stroke-width="1" fill="none"/>
<path transform="translate(0,0.5)" d="M65 667H811" stroke="#006a6a" stroke-width="1" fill="none"/>
<rect x="273" y="594" width="221" height="1" fill="#dcdcdc"/>
<rect x="279" y="601" width="209" height="1" fill="#dcdcdc"/>
<rect x="273" y="714" width="221" height="1" fill="#dcdcdc"/>
<rect x="270" y="605" width="1" height="100" fill="#dcdcdc"/>
<rect x="276" y="605" width="1" height="100" fill="#dcdcdc"/>
<rect x="490" y="605" width="1" height="100" fill="#dcdcdc"/>
<rect x="496" y="605" width="1" height="100" fill="#dcdcdc"/>
<rect x="279" y="707" width="9" height="1" fill="#dcdcdc"/>
<rect x="479" y="707" width="9" height="1" fill="#dcdcdc"/>
<rect x="268" y="593" width="5" height="5" fill="#000"/><rect x="269" y="594" width="3" height="3" fill="#fff"/>
<rect x="268" y="600" width="5" height="5" fill="#000"/><rect x="269" y="601" width="3" height="3" fill="#fff"/>
<rect x="274" y="600" width="5" height="5" fill="#000"/><rect x="275" y="601" width="3" height="3" fill="#fff"/>
<rect x="494" y="593" width="5" height="5" fill="#000"/><rect x="495" y="594" width="3" height="3" fill="#fff"/>
<rect x="488" y="600" width="5" height="5" fill="#000"/><rect x="489" y="601" width="3" height="3" fill="#fff"/>
<rect x="494" y="600" width="5" height="5" fill="#000"/><rect x="495" y="601" width="3" height="3" fill="#fff"/>
<rect x="268" y="706" width="5" height="5" fill="#000"/><rect x="269" y="707" width="3" height="3" fill="#fff"/>
<rect x="274" y="706" width="5" height="5" fill="#000"/><rect x="275" y="707" width="3" height="3" fill="#fff"/>
<rect x="268" y="713" width="5" height="5" fill="#000"/><rect x="269" y="714" width="3" height="3" fill="#fff"/>
<rect x="488" y="706" width="5" height="5" fill="#000"/><rect x="489" y="707" width="3" height="3" fill="#fff"/>
<rect x="494" y="706" width="5" height="5" fill="#000"/><rect x="495" y="707" width="3" height="3" fill="#fff"/>
<rect x="494" y="713" width="5" height="5" fill="#000"/><rect x="495" y="714" width="3" height="3" fill="#fff"/>
<rect x="270" y="598" width="1" height="2" fill="#dcdcdc"/><rect x="273" y="601" width="1" height="1" fill="#dcdcdc"/>
<rect x="496" y="598" width="1" height="2" fill="#dcdcdc"/><rect x="493" y="601" width="1" height="1" fill="#dcdcdc"/>
<rect x="270" y="711" width="1" height="2" fill="#dcdcdc"/><rect x="273" y="707" width="1" height="1" fill="#dcdcdc"/>
<rect x="496" y="711" width="1" height="2" fill="#dcdcdc"/><rect x="493" y="707" width="1" height="1" fill="#dcdcdc"/>
<rect x="306" y="694" width="8" height="1" fill="#00e676"/>
<rect x="306" y="707" width="8" height="1" fill="#00e676"/>
<path d="M306.5 697.5L313.5 704.5M306.5 704.5L313.5 697.5" stroke="#00e676" stroke-width="1" fill="none" shape-rendering="geometricPrecision"/>
<rect x="319" y="694" width="9" height="1" fill="#00e676"/>
<rect x="319" y="707" width="9" height="1" fill="#00e676"/>
<path d="M319.5 697.5L327.5 704.5M319.5 704.5L327.5 697.5" stroke="#00e676" stroke-width="1" fill="none" shape-rendering="geometricPrecision"/>
<path d="M319.5 704.5L327.5 697.5" stroke="#00e676" stroke-width="1.5" fill="none" shape-rendering="geometricPrecision"/>
<rect x="333" y="707" width="8" height="1" fill="#0078c0"/>
<rect x="346" y="694" width="8" height="1" fill="#00e676"/>
<rect x="346" y="707" width="8" height="1" fill="#00e676"/>
<path d="M346.5 697.5L353.5 704.5M346.5 704.5L353.5 697.5" stroke="#00e676" stroke-width="1" fill="none" shape-rendering="geometricPrecision"/>
<rect x="359" y="694" width="9" height="1" fill="#00e676"/>
<rect x="359" y="707" width="9" height="1" fill="#00e676"/>
<path d="M359.5 697.5L367.5 704.5M359.5 704.5L367.5 697.5" stroke="#00e676" stroke-width="1" fill="none" shape-rendering="geometricPrecision"/>
<path d="M359.5 704.5L367.5 697.5" stroke="#00e676" stroke-width="1.5" fill="none" shape-rendering="geometricPrecision"/>
<rect x="373" y="707" width="8" height="1" fill="#0078c0"/>
<rect x="386" y="694" width="8" height="1" fill="#00e676"/>
<rect x="386" y="707" width="8" height="1" fill="#00e676"/>
<path d="M386.5 697.5L393.5 704.5M386.5 704.5L393.5 697.5" stroke="#00e676" stroke-width="1" fill="none" shape-rendering="geometricPrecision"/>
<rect x="399" y="694" width="9" height="1" fill="#00e676"/>
<rect x="399" y="707" width="9" height="1" fill="#00e676"/>
<path d="M399.5 697.5L407.5 704.5M399.5 704.5L407.5 697.5" stroke="#00e676" stroke-width="1" fill="none" shape-rendering="geometricPrecision"/>
<path d="M399.5 704.5L407.5 697.5" stroke="#00e676" stroke-width="1.5" fill="none" shape-rendering="geometricPrecision"/>
<rect x="413" y="707" width="8" height="1" fill="#0078c0"/>
<rect x="426" y="694" width="8" height="1" fill="#00e676"/>
<rect x="426" y="707" width="8" height="1" fill="#00e676"/>
<path d="M426.5 697.5L433.5 704.5M426.5 704.5L433.5 697.5" stroke="#00e676" stroke-width="1" fill="none" shape-rendering="geometricPrecision"/>
<rect x="439" y="694" width="9" height="1" fill="#00e676"/>
<rect x="439" y="707" width="9" height="1" fill="#00e676"/>
<path d="M439.5 697.5L447.5 704.5M439.5 704.5L447.5 697.5" stroke="#00e676" stroke-width="1" fill="none" shape-rendering="geometricPrecision"/>
<path d="M439.5 704.5L447.5 697.5" stroke="#00e676" stroke-width="1.5" fill="none" shape-rendering="geometricPrecision"/>
<rect x="453" y="707" width="8" height="1" fill="#0078c0"/>
<rect x="466" y="694" width="8" height="1" fill="#00e676"/>
<rect x="466" y="707" width="8" height="1" fill="#00e676"/>
<path d="M466.5 697.5L473.5 704.5M466.5 704.5L473.5 697.5" stroke="#00e676" stroke-width="1" fill="none" shape-rendering="geometricPrecision"/>
<rect x="303" y="698" width="1" height="7" fill="#00e676"/>
<rect x="316" y="698" width="1" height="7" fill="#00e676"/>
<rect x="330" y="698" width="1" height="7" fill="#00e676"/>
<rect x="343" y="698" width="1" height="7" fill="#00e676"/>
<rect x="356" y="698" width="1" height="7" fill="#00e676"/>
<rect x="370" y="698" width="1" height="7" fill="#00e676"/>
<rect x="383" y="698" width="1" height="7" fill="#00e676"/>
<rect x="396" y="698" width="1" height="7" fill="#00e676"/>
<rect x="410" y="698" width="1" height="7" fill="#00e676"/>
<rect x="423" y="698" width="1" height="7" fill="#00e676"/>
<rect x="436" y="698" width="1" height="7" fill="#00e676"/>
<rect x="450" y="698" width="1" height="7" fill="#00e676"/>
<rect x="463" y="698" width="1" height="7" fill="#00e676"/>
<rect x="476" y="698" width="1" height="7" fill="#00e676"/>
<rect x="293" y="681" width="8" height="1" fill="#0078c0"/>
<rect x="290" y="685" width="1" height="7" fill="#0078c0"/>
<rect x="303" y="685" width="1" height="7" fill="#0078c0"/>
<rect x="290" y="691" width="1" height="14" fill="#0078c0"/>
<rect x="293" y="707" width="8" height="1" fill="#0078c0"/>
<path d="M293.5 691.5L300.5 698.5M293.5 698.5L300.5 691.5" stroke="#0078c0" stroke-width="1" fill="none" shape-rendering="geometricPrecision"/>
<rect x="333" y="681" width="8" height="1" fill="#0078c0"/>
<rect x="330" y="685" width="1" height="7" fill="#0078c0"/>
<rect x="343" y="685" width="1" height="7" fill="#0078c0"/>
<path d="M333.5 691.5L340.5 698.5M333.5 698.5L340.5 691.5" stroke="#0078c0" stroke-width="1" fill="none" shape-rendering="geometricPrecision"/>
<rect x="373" y="681" width="8" height="1" fill="#0078c0"/>
<rect x="370" y="685" width="1" height="7" fill="#0078c0"/>
<rect x="383" y="685" width="1" height="7" fill="#0078c0"/>
<path d="M373.5 691.5L380.5 698.5M373.5 698.5L380.5 691.5" stroke="#0078c0" stroke-width="1" fill="none" shape-rendering="geometricPrecision"/>
<rect x="413" y="681" width="8" height="1" fill="#0078c0"/>
<rect x="410" y="685" width="1" height="7" fill="#0078c0"/>
<rect x="423" y="685" width="1" height="7" fill="#0078c0"/>
<path d="M413.5 691.5L420.5 698.5M413.5 698.5L420.5 691.5" stroke="#0078c0" stroke-width="1" fill="none" shape-rendering="geometricPrecision"/>
<rect x="453" y="681" width="8" height="1" fill="#0078c0"/>
<rect x="450" y="685" width="1" height="7" fill="#0078c0"/>
<rect x="463" y="685" width="1" height="7" fill="#0078c0"/>
<path d="M453.5 691.5L460.5 698.5M453.5 698.5L460.5 691.5" stroke="#0078c0" stroke-width="1" fill="none" shape-rendering="geometricPrecision"/>
<rect x="288" y="680" width="5" height="5" fill="#000"/><rect x="289" y="681" width="3" height="3" fill="#fff"/>
<rect x="301" y="680" width="5" height="5" fill="#000"/><rect x="302" y="681" width="3" height="3" fill="#fff"/>
<rect x="328" y="680" width="5" height="5" fill="#000"/><rect x="329" y="681" width="3" height="3" fill="#fff"/>
<rect x="341" y="680" width="5" height="5" fill="#000"/><rect x="342" y="681" width="3" height="3" fill="#fff"/>
<rect x="368" y="680" width="5" height="5" fill="#000"/><rect x="369" y="681" width="3" height="3" fill="#fff"/>
<rect x="381" y="680" width="5" height="5" fill="#000"/><rect x="382" y="681" width="3" height="3" fill="#fff"/>
<rect x="408" y="680" width="5" height="5" fill="#000"/><rect x="409" y="681" width="3" height="3" fill="#fff"/>
<rect x="421" y="680" width="5" height="5" fill="#000"/><rect x="422" y="681" width="3" height="3" fill="#fff"/>
<rect x="448" y="680" width="5" height="5" fill="#000"/><rect x="449" y="681" width="3" height="3" fill="#fff"/>
<rect x="461" y="680" width="5" height="5" fill="#000"/><rect x="462" y="681" width="3" height="3" fill="#fff"/>
<rect x="301" y="693" width="5" height="5" fill="#000"/><rect x="302" y="694" width="3" height="3" fill="#fff"/>
<rect x="314" y="693" width="5" height="5" fill="#000"/><rect x="315" y="694" width="3" height="3" fill="#fff"/>
<rect x="328" y="693" width="5" height="5" fill="#000"/><rect x="329" y="694" width="3" height="3" fill="#fff"/>
<rect x="341" y="693" width="5" height="5" fill="#000"/><rect x="342" y="694" width="3" height="3" fill="#fff"/>
<rect x="354" y="693" width="5" height="5" fill="#000"/><rect x="355" y="694" width="3" height="3" fill="#fff"/>
<rect x="368" y="693" width="5" height="5" fill="#000"/><rect x="369" y="694" width="3" height="3" fill="#fff"/>
<rect x="381" y="693" width="5" height="5" fill="#000"/><rect x="382" y="694" width="3" height="3" fill="#fff"/>
<rect x="394" y="693" width="5" height="5" fill="#000"/><rect x="395" y="694" width="3" height="3" fill="#fff"/>
<rect x="408" y="693" width="5" height="5" fill="#000"/><rect x="409" y="694" width="3" height="3" fill="#fff"/>
<rect x="421" y="693" width="5" height="5" fill="#000"/><rect x="422" y="694" width="3" height="3" fill="#fff"/>
<rect x="434" y="693" width="5" height="5" fill="#000"/><rect x="435" y="694" width="3" height="3" fill="#fff"/>
<rect x="448" y="693" width="5" height="5" fill="#000"/><rect x="449" y="694" width="3" height="3" fill="#fff"/>
<rect x="461" y="693" width="5" height="5" fill="#000"/><rect x="462" y="694" width="3" height="3" fill="#fff"/>
<rect x="474" y="693" width="5" height="5" fill="#000"/><rect x="475" y="694" width="3" height="3" fill="#fff"/>
<rect x="288" y="706" width="5" height="5" fill="#000"/><rect x="289" y="707" width="3" height="3" fill="#fff"/>
<rect x="301" y="706" width="5" height="5" fill="#000"/><rect x="302" y="707" width="3" height="3" fill="#fff"/>
<rect x="314" y="706" width="5" height="5" fill="#000"/><rect x="315" y="707" width="3" height="3" fill="#fff"/>
<rect x="328" y="706" width="5" height="5" fill="#000"/><rect x="329" y="707" width="3" height="3" fill="#fff"/>
<rect x="341" y="706" width="5" height="5" fill="#000"/><rect x="342" y="707" width="3" height="3" fill="#fff"/>
<rect x="354" y="706" width="5" height="5" fill="#000"/><rect x="355" y="707" width="3" height="3" fill="#fff"/>
<rect x="368" y="706" width="5" height="5" fill="#000"/><rect x="369" y="707" width="3" height="3" fill="#fff"/>
<rect x="381" y="706" width="5" height="5" fill="#000"/><rect x="382" y="707" width="3" height="3" fill="#fff"/>
<rect x="394" y="706" width="5" height="5" fill="#000"/><rect x="395" y="707" width="3" height="3" fill="#fff"/>
<rect x="408" y="706" width="5" height="5" fill="#000"/><rect x="409" y="707" width="3" height="3" fill="#fff"/>
<rect x="421" y="706" width="5" height="5" fill="#000"/><rect x="422" y="707" width="3" height="3" fill="#fff"/>
<rect x="434" y="706" width="5" height="5" fill="#000"/><rect x="435" y="707" width="3" height="3" fill="#fff"/>
<rect x="448" y="706" width="5" height="5" fill="#000"/><rect x="449" y="707" width="3" height="3" fill="#fff"/>
<rect x="461" y="706" width="5" height="5" fill="#000"/><rect x="462" y="707" width="3" height="3" fill="#fff"/>
<rect x="474" y="706" width="5" height="5" fill="#000"/><rect x="475" y="707" width="3" height="3" fill="#fff"/>
<rect x="300" y="692.5" width="7" height="16" rx="2" fill="none" stroke="#dd1fdd" stroke-width="1.3" shape-rendering="geometricPrecision"/>
<rect x="340" y="692.5" width="7" height="16" rx="2" fill="none" stroke="#dd1fdd" stroke-width="1.3" shape-rendering="geometricPrecision"/>
<rect x="380" y="692.5" width="7" height="16" rx="2" fill="none" stroke="#dd1fdd" stroke-width="1.3" shape-rendering="geometricPrecision"/>
<rect x="420" y="692.5" width="7" height="16" rx="2" fill="none" stroke="#dd1fdd" stroke-width="1.3" shape-rendering="geometricPrecision"/>
<rect x="460" y="692.5" width="7" height="16" rx="2" fill="none" stroke="#dd1fdd" stroke-width="1.3" shape-rendering="geometricPrecision"/>
<rect x="371" y="603" width="25" height="25" fill="#000"/>
<rect x="372" y="604" width="7" height="7" fill="#fff"/>
<rect x="372" y="612" width="7" height="7" fill="#fff"/>
<rect x="372" y="620" width="7" height="7" fill="#fff"/>
<rect x="380" y="604" width="7" height="7" fill="#fff"/>
<rect x="380" y="620" width="7" height="7" fill="#fff"/>
<rect x="388" y="604" width="7" height="7" fill="#fff"/>
<rect x="388" y="612" width="7" height="7" fill="#fff"/>
<rect x="388" y="620" width="7" height="7" fill="#fff"/>
<rect x="383" y="612" width="1" height="7" fill="#006a6a"/>
<circle cx="383.5" cy="615" r="2.3" fill="none" stroke="#ff2000" stroke-width="1" shape-rendering="geometricPrecision"/>
<path d="M371.79 591.52 L374.04 589.60 L374.04 597.45M371.79 597.45 L376.18 597.45M382.82 590.65 L381.85 589.60 L379.80 589.60 L378.33 591.17 L378.33 596.05 L379.60 597.45 L381.75 597.45 L383.11 596.14 L383.11 594.48 L381.85 593.35 L379.80 593.35 L378.33 594.48M385.36 596.66 L386.24 596.66 L386.24 597.45 L385.36 597.45 L385.36 596.66M390.04 589.60 L392.19 589.60 L393.66 591.00 L393.66 596.05 L392.19 597.45 L390.04 597.45 L388.58 596.05 L388.58 591.00 L390.04 589.60" stroke="#fff" stroke-width="1.15" fill="none" shape-rendering="geometricPrecision" stroke-linejoin="round"/>
<path d="M345.89 613.62 L348.14 611.70 L348.14 619.55M345.89 619.55 L350.28 619.55M356.92 612.75 L355.95 611.70 L353.90 611.70 L352.43 613.27 L352.43 618.15 L353.70 619.55 L355.85 619.55 L357.21 618.24 L357.21 616.58 L355.95 615.45 L353.90 615.45 L352.43 616.58M359.46 618.76 L360.34 618.76 L360.34 619.55 L359.46 619.55 L359.46 618.76M364.14 611.70 L366.29 611.70 L367.76 613.10 L367.76 618.15 L366.29 619.55 L364.14 619.55 L362.68 618.15 L362.68 613.10 L364.14 611.70" stroke="#fff" stroke-width="1.15" fill="none" shape-rendering="geometricPrecision" stroke-linejoin="round"/>
<path d="M380 651.5L387 658.5M380 658.5L387 651.5" stroke="#fff" stroke-width="1" fill="none" shape-rendering="geometricPrecision"/>
</svg>
<svg class="a" style="left:835px;top:459px;" width="755" height="404" viewBox="835 459 755 404" shape-rendering="crispEdges">
<rect x="835" y="459" width="755" height="404" fill="#000"/>
<path transform="translate(0.5,0)" d="M851 459V863M870 459V863M890 459V863M928 459V863M947 459V863M967 459V863M986 459V863M1005 459V863M1024 459V863M1043 459V863M1082 459V863M1101 459V863M1120 459V863M1140 459V863M1159 459V863M1178 459V863M1197 459V863M1236 459V863M1255 459V863M1274 459V863M1293 459V863M1313 459V863M1332 459V863M1351 459V863M1389 459V863M1409 459V863M1428 459V863M1447 459V863M1466 459V863M1485 459V863M1505 459V863M1543 459V863M1562 459V863M1582 459V863" stroke="#4b4b4b" stroke-width="1" fill="none"/>
<path transform="translate(0,0.5)" d="M835 471H1590M835 490H1590M835 529H1590M835 548H1590M835 567H1590M835 586H1590M835 606H1590M835 625H1590M835 644H1590M835 683H1590M835 702H1590M835 721H1590M835 740H1590M835 759H1590M835 779H1590M835 798H1590M835 836H1590M835 856H1590" stroke="#4b4b4b" stroke-width="1" fill="none"/>
<path transform="translate(0.5,0)" d="M1063 459V863M1370 459V863" stroke="#767676" stroke-width="1" fill="none"/>
<path transform="translate(0,0.5)" d="M835 510H1590M835 817H1590" stroke="#767676" stroke-width="1" fill="none"/>
<path transform="translate(0.5,0)" d="M909 459V863M1524 459V863" stroke="#6e3400" stroke-width="1" fill="none"/>
<path transform="translate(0.5,0)" d="M1216 459V863" stroke="#006a6a" stroke-width="1" fill="none"/>
<path transform="translate(0,0.5)" d="M835 663H1590" stroke="#006a6a" stroke-width="1" fill="none"/>
<rect x="1200" y="558" width="178" height="1" fill="#dcdcdc"/>
<rect x="1200" y="567" width="168" height="1" fill="#dcdcdc"/>
<rect x="1200" y="731" width="178" height="1" fill="#dcdcdc"/>
<rect x="1370" y="571" width="1" height="148" fill="#dcdcdc"/>
<rect x="1380" y="571" width="1" height="148" fill="#dcdcdc"/>
<rect x="1354" y="721" width="14" height="1" fill="#dcdcdc"/>
<rect x="1373" y="721" width="5" height="1" fill="#dcdcdc"/>
<rect x="1373" y="567" width="5" height="1" fill="#dcdcdc"/>
<rect x="1380" y="562" width="1" height="4" fill="#dcdcdc"/>
<rect x="1380" y="725" width="1" height="5" fill="#dcdcdc"/>
<rect x="1378" y="557" width="5" height="5" fill="#000"/><rect x="1379" y="558" width="3" height="3" fill="#fff"/>
<rect x="1368" y="566" width="5" height="5" fill="#000"/><rect x="1369" y="567" width="3" height="3" fill="#fff"/>
<rect x="1378" y="566" width="5" height="5" fill="#000"/><rect x="1379" y="567" width="3" height="3" fill="#fff"/>
<rect x="1368" y="720" width="5" height="5" fill="#000"/><rect x="1369" y="721" width="3" height="3" fill="#fff"/>
<rect x="1378" y="720" width="5" height="5" fill="#000"/><rect x="1379" y="721" width="3" height="3" fill="#fff"/>
<rect x="1378" y="730" width="5" height="5" fill="#000"/><rect x="1379" y="731" width="3" height="3" fill="#fff"/>
<rect x="1277" y="702" width="14" height="1" fill="#00e676"/>
<rect x="1277" y="721" width="14" height="1" fill="#00e676"/>
<rect x="1296" y="702" width="15" height="1" fill="#00e676"/>
<rect x="1296" y="721" width="15" height="1" fill="#00e676"/>
<rect x="1335" y="702" width="14" height="1" fill="#00e676"/>
<rect x="1335" y="721" width="14" height="1" fill="#00e676"/>
<rect x="1293" y="706" width="1" height="13" fill="#00e676"/>
<rect x="1313" y="706" width="1" height="13" fill="#00e676"/>
<rect x="1332" y="706" width="1" height="13" fill="#00e676"/>
<rect x="1351" y="706" width="1" height="13" fill="#00e676"/>
<rect x="1316" y="683" width="14" height="1" fill="#0078c0"/>
<rect x="1316" y="721" width="14" height="1" fill="#0078c0"/>
<rect x="1313" y="687" width="1" height="13" fill="#0078c0"/>
<rect x="1332" y="687" width="1" height="13" fill="#0078c0"/>
<path d="M1334.5 719.5L1349 705" stroke="#00e676" stroke-width="1.1" stroke-dasharray="1.5 1" fill="none" shape-rendering="geometricPrecision"/>
<rect x="1311" y="682" width="5" height="5" fill="#000"/><rect x="1312" y="683" width="3" height="3" fill="#fff"/>
<rect x="1330" y="682" width="5" height="5" fill="#000"/><rect x="1331" y="683" width="3" height="3" fill="#fff"/>
<rect x="1291" y="701" width="5" height="5" fill="#000"/><rect x="1292" y="702" width="3" height="3" fill="#fff"/>
<rect x="1291" y="720" width="5" height="5" fill="#000"/><rect x="1292" y="721" width="3" height="3" fill="#fff"/>
<rect x="1311" y="701" width="5" height="5" fill="#000"/><rect x="1312" y="702" width="3" height="3" fill="#fff"/>
<rect x="1311" y="720" width="5" height="5" fill="#000"/><rect x="1312" y="721" width="3" height="3" fill="#fff"/>
<rect x="1330" y="701" width="5" height="5" fill="#000"/><rect x="1331" y="702" width="3" height="3" fill="#fff"/>
<rect x="1330" y="720" width="5" height="5" fill="#000"/><rect x="1331" y="721" width="3" height="3" fill="#fff"/>
<rect x="1349" y="701" width="5" height="5" fill="#000"/><rect x="1350" y="702" width="3" height="3" fill="#fff"/>
<rect x="1349" y="720" width="5" height="5" fill="#000"/><rect x="1350" y="721" width="3" height="3" fill="#fff"/>
<rect x="1328.5" y="699.5" width="8" height="21.5" rx="1.5" fill="none" stroke="#dd1fdd" stroke-width="1.2" shape-rendering="geometricPrecision"/>
</svg>
<div class="a" style="left:1618px;top:73px;width:153px;height:657px;background:#ffffff;"></div>
<div class="a" style="left:1620px;top:73px;width:151px;height:656px;background:#f0f0f0;"></div>
<div class="a" style="left:1620px;top:73px;width:150px;height:1px;background:#fff;"></div>
<div class="a" style="left:1769px;top:74px;width:1px;height:99px;background:#a0a0a0;"></div>
<div class="a" style="left:1620px;top:172px;width:150px;height:1px;background:#e3e3e3;"></div>
<div class="a" style="left:1620px;top:173px;width:151px;height:1px;background:#8c8c8c;"></div>
<div class="t" style="left:1629.3px;top:84.2px;font-size:11.5px;line-height:13.5px;color:#000;transform:scaleX(0.8818);transform-origin:0 0;-webkit-text-stroke:0.3px;">Select:</div>
<div class="a btnp" style="left:1629px;top:101px;width:131px;height:15px"></div>
<div class="t" style="left:1676.5px;top:102.6px;font-size:11.5px;line-height:13.5px;color:#000;transform:scaleX(0.9547);transform-origin:0 0;-webkit-text-stroke:0.3px;">Groups</div>
<div class="a btn" style="left:1629px;top:125px;width:131px;height:16px"></div>
<div class="t" style="left:1676.25px;top:126.9px;font-size:11.5px;line-height:13.5px;color:#000;transform:scaleX(0.9363);transform-origin:0 0;-webkit-text-stroke:0.3px;">Objects</div>
<div class="a btn" style="left:1629px;top:148px;width:131px;height:16px"></div>
<div class="t" style="left:1680px;top:149.9px;font-size:11.5px;line-height:13.5px;color:#000;transform:scaleX(0.9259);transform-origin:0 0;-webkit-text-stroke:0.3px;">Solids</div>
<div class="a" style="left:1769px;top:174px;width:2px;height:120px;background:#696969;"></div>
<div class="t" style="left:1624.1px;top:176.9px;font-size:11.5px;line-height:13.5px;color:#000;transform:scaleX(0.9169);transform-origin:0 0;-webkit-text-stroke:0.3px;">Texture group:</div>
<div class="a sunk" style="left:1629px;top:192px;width:137px;height:19px;background:#fff"></div>
<div class="a btn" style="left:1748px;top:194px;width:16px;height:15px"></div>
<svg class="a" style="left:1752px;top:200px" width="8" height="5" viewBox="0 0 8 5" shape-rendering="crispEdges"><path d="M0 0H7L3.5 4Z" fill="#000"/></svg>
<div class="t" style="left:1633.5px;top:195.4px;font-size:11.5px;line-height:13.5px;color:#000;transform:scaleX(0.8961);transform-origin:0 0;-webkit-text-stroke:0.3px;">Materials</div>
<div class="t" style="left:1624.1px;top:214.6px;font-size:11.5px;line-height:13.5px;color:#000;transform:scaleX(0.8762);transform-origin:0 0;-webkit-text-stroke:0.3px;">Current texture:</div>
<div class="a sunk" style="left:1629px;top:229px;width:137px;height:21px;background:#fff"></div>
<div class="a btn" style="left:1748px;top:231px;width:16px;height:17px"></div>
<svg class="a" style="left:1752px;top:238px" width="8" height="5" viewBox="0 0 8 5" shape-rendering="crispEdges"><path d="M0 0H7L3.5 4Z" fill="#000"/></svg>
<div class="t" style="left:1636.9px;top:233.3px;font-size:11.5px;line-height:13.5px;color:#000;transform:scaleX(0.9154);transform-origin:0 0;-webkit-text-stroke:0.3px;">anubis/hr_stone_wall01</div>
<svg class="a" style="left:1629px;top:256px" width="74" height="80" viewBox="0 0 74 80"><defs><filter id="tx" x="0" y="0" width="100%" height="100%"><feTurbulence type="fractalNoise" baseFrequency="0.85" numOctaves="2" seed="11"/><feColorMatrix values="0 0 0 0 0.30  0 0 0 0 0.24  0 0 0 0 0.18  0 1.6 0 0 -0.62"/></filter><filter id="tx2" x="0" y="0" width="100%" height="100%"><feTurbulence type="fractalNoise" baseFrequency="0.8" numOctaves="2" seed="5"/><feColorMatrix values="0 0 0 0 0.92  0 0 0 0 0.86  0 0 0 0 0.78  1.6 0 0 0 -0.68"/></filter></defs><rect width="74" height="80" fill="#c0af99"/><rect width="74" height="80" filter="url(#tx)"/><rect width="74" height="80" filter="url(#tx2)"/>
<path d="M0 10.500H74M0 20.400H74M0 30.300H74M0 40.200H74M0 50.500H74M0 60.400H74M0 70.300H74" stroke="#857360" stroke-width="1" opacity=".38"/><path d="M20 0V10M55 0V10M38 10V20M8 20V30M48 20V30M20 40V50M62 30V40M14 50V60M44 50V60M30 60V70M58 70V80" stroke="#857360" stroke-width="1" opacity=".22"/>
<rect x="0" y="0" width="74" height="1" fill="#8d8d8d"/><rect x="0" y="0" width="1" height="80" fill="#8d8d8d"/></svg>
<div class="t" style="left:1707.9px;top:258.5px;font-size:11.5px;line-height:13.5px;color:#000;transform:scaleX(0.9137);transform-origin:0 0;-webkit-text-stroke:0.3px;">1024x1024</div>
<div class="a btn dflt" style="left:1707px;top:285px;width:60px;height:23px"></div>
<div class="t" style="left:1715px;top:289.5px;font-size:11.5px;line-height:13.5px;color:#000;transform:scaleX(0.9117);transform-origin:0 0;-webkit-text-stroke:0.3px;">Browse...</div>
<div class="a" style="left:1715px;top:300px;width:7px;height:1px;background:#000;"></div>
<div class="a btn" style="left:1707px;top:313px;width:60px;height:23px"></div>
<div class="t" style="left:1712.2px;top:318.1px;font-size:11.5px;line-height:13.5px;color:#000;transform:scaleX(0.9309);transform-origin:0 0;-webkit-text-stroke:0.3px;">Replace...</div>
<div class="a" style="left:1712px;top:329px;width:8px;height:1px;background:#000;"></div>
<div class="a" style="left:1620px;top:343px;width:151px;height:1px;background:#a0a0a0;"></div>
<div class="a" style="left:1620px;top:344px;width:151px;height:1px;background:#fff;"></div>
<div class="t" style="left:1624.1px;top:346.9px;font-size:11.5px;line-height:13.5px;color:#000;transform:scaleX(0.8911);transform-origin:0 0;-webkit-text-stroke:0.3px;">VisGroups:</div>
<div class="a" style="left:1624px;top:381px;width:142px;height:162px;box-shadow:inset 1px 1px 0 #fff, inset -1px -1px 0 #696969, inset -2px -2px 0 #a0a0a0"></div>
<div class="a" style="left:1669px;top:364px;width:40px;height:17px;background:#f0f0f0;border-radius:2px 2px 0 0;box-shadow:inset 1px 1px 0 #fff, inset -1px 0 0 #696969, inset -2px 0 0 #a0a0a0"></div>
<div class="a" style="left:1709px;top:364px;width:46px;height:17px;background:#f0f0f0;border-radius:2px 2px 0 0;box-shadow:inset 1px 1px 0 #fff, inset -1px 0 0 #696969, inset -2px 0 0 #a0a0a0"></div>
<div class="a" style="left:1624px;top:362px;width:45px;height:21px;background:#f0f0f0;border-radius:2px 2px 0 0;box-shadow:inset 1px 1px 0 #fff, inset -1px 0 0 #696969, inset -2px 0 0 #a0a0a0"></div>
<div class="a" style="left:1625px;top:381px;width:42px;height:2px;background:#f0f0f0;"></div>
<div class="t" style="left:1631.5px;top:364.8px;font-size:11.5px;line-height:13.5px;color:#000;transform:scaleX(0.8938);transform-origin:0 0;-webkit-text-stroke:0.3px;">User</div>
<div class="t" style="left:1673px;top:366.7px;font-size:11.5px;line-height:13.5px;color:#000;transform:scaleX(0.9385);transform-origin:0 0;-webkit-text-stroke:0.3px;">Auto</div>
<div class="t" style="left:1715.6px;top:366.7px;font-size:11.5px;line-height:13.5px;color:#000;transform:scaleX(0.8962);transform-origin:0 0;-webkit-text-stroke:0.3px;">Cordon</div>
<div class="a sunk" style="left:1626px;top:385px;width:135px;height:154px;background:#fff"></div>
<div class="a btn" style="left:1621.5px;top:546px;width:33px;height:16px"></div>
<div class="t" style="left:1624.5px;top:547.7px;font-size:11.5px;line-height:13.5px;color:#000;transform:scaleX(0.9386);transform-origin:0 0;-webkit-text-stroke:0.3px;">Show</div>
<div class="a" style="left:1624px;top:559px;width:7px;height:1px;background:#000;"></div>
<div class="a btn" style="left:1657.5px;top:546px;width:35px;height:16px"></div>
<div class="t" style="left:1666.25px;top:547.7px;font-size:11.5px;line-height:13.5px;color:#000;transform:scaleX(0.8831);transform-origin:0 0;-webkit-text-stroke:0.3px;">Edit</div>
<div class="a" style="left:1666px;top:559px;width:7px;height:1px;background:#000;"></div>
<div class="a btn" style="left:1696.5px;top:546px;width:33px;height:16px"></div>
<div class="t" style="left:1701.5px;top:547.7px;font-size:11.5px;line-height:13.5px;color:#000;transform:scaleX(0.9001);transform-origin:0 0;-webkit-text-stroke:0.3px;">Mark</div>
<div class="a" style="left:1702px;top:559px;width:9px;height:1px;background:#000;"></div>
<div class="a btn" style="left:1735px;top:546px;width:16px;height:16px"></div>
<div class="a btn" style="left:1753px;top:546px;width:16px;height:16px"></div>
<svg class="a" style="left:1735px;top:546px" width="34" height="16" viewBox="0 0 34 16" shape-rendering="crispEdges"><path d="M7 3L11 7H8.5V12H5.5V7H3Z M25 12L29 8H26.5V3H23.5V8H21Z" fill="#000"/></svg>
<div class="a" style="left:1620px;top:565px;width:151px;height:1px;background:#a0a0a0;"></div>
<div class="a" style="left:1620px;top:566px;width:151px;height:1px;background:#fff;"></div>
<div class="t" style="left:1623.2px;top:567.8px;font-size:11.5px;line-height:13.5px;color:#000;transform:scaleX(0.9424);transform-origin:0 0;-webkit-text-stroke:0.3px;">Move</div>
<div class="t" style="left:1623.2px;top:580.7px;font-size:11.5px;line-height:13.5px;color:#000;transform:scaleX(0.8908);transform-origin:0 0;-webkit-text-stroke:0.3px;">selected:</div>
<div class="a btn" style="left:1669.5px;top:569px;width:47.5px;height:22px"></div>
<div class="t" style="left:1674.75px;top:573.5px;font-size:11.5px;line-height:13.5px;color:#000;transform:scaleX(0.9388);transform-origin:0 0;-webkit-text-stroke:0.3px;">toWorld</div>
<div class="a" style="left:1684px;top:584px;width:10px;height:1px;background:#000;"></div>
<div class="a btn" style="left:1719.5px;top:569px;width:46.5px;height:22px"></div>
<div class="t" style="left:1724.75px;top:573.5px;font-size:11.5px;line-height:13.5px;color:#000;transform:scaleX(0.9387);transform-origin:0 0;-webkit-text-stroke:0.3px;">toEntity</div>
<div class="a" style="left:1734px;top:584px;width:7px;height:1px;background:#000;"></div>
<div class="t" style="left:1623.7px;top:598.7px;font-size:11.5px;line-height:13.5px;color:#000;transform:scaleX(0.8928);transform-origin:0 0;-webkit-text-stroke:0.3px;">Categories:</div>
<div class="a" style="left:1624px;top:610px;width:7px;height:1px;background:#000;"></div>
<div class="a sunk" style="left:1623px;top:614px;width:142px;height:20px;background:#f0f0f0"></div>
<div class="a btn" style="left:1747px;top:616px;width:16px;height:16px"></div>
<svg class="a" style="left:1752px;top:622px" width="8" height="5" viewBox="0 0 8 5" shape-rendering="crispEdges"><path d="M0 0H7L3.5 4Z" fill="#a0a0a0"/></svg>
<div class="t" style="left:1623.7px;top:637.9px;font-size:11.5px;line-height:13.5px;color:#000;transform:scaleX(0.8772);transform-origin:0 0;-webkit-text-stroke:0.3px;">Objects:</div>
<div class="a" style="left:1624px;top:649px;width:8px;height:1px;background:#000;"></div>
<div class="a sunk" style="left:1623px;top:653px;width:142px;height:20px;background:#f0f0f0"></div>
<div class="a btn" style="left:1747px;top:655px;width:16px;height:16px"></div>
<svg class="a" style="left:1752px;top:662px" width="8" height="5" viewBox="0 0 8 5" shape-rendering="crispEdges"><path d="M0 0H7L3.5 4Z" fill="#a0a0a0"/></svg>
<div class="a sunk" style="left:1624px;top:682px;width:12px;height:12px;background:#fff"></div>
<div class="t" style="left:1642.2px;top:682.7px;font-size:11.5px;line-height:13.5px;color:#000;transform:scaleX(0.9195);transform-origin:0 0;-webkit-text-stroke:0.3px;">Random Yaw</div>
<div class="a btn" style="left:1641px;top:704.5px;width:107px;height:23px"></div>
<div class="t" style="left:1661.5px;top:709.5px;font-size:11.5px;line-height:13.5px;color:#000;transform:scaleX(0.9219);transform-origin:0 0;-webkit-text-stroke:0.3px;">Create Prefab</div>
<div class="a" style="left:1662px;top:720px;width:8px;height:1px;background:#000;"></div>
<div class="a" style="left:1620px;top:728px;width:151px;height:1px;background:#a0a0a0;"></div>
<div class="a" style="left:1618px;top:729px;width:153px;height:1px;background:#fff;"></div>
<div class="a" style="left:628.6px;top:286px;width:662.6px;height:493px;background:#f0f0f0;box-shadow:0 0 0 0.6px rgba(90,90,90,.35), 0 1px 8px rgba(0,0,0,.22)"></div>
<div class="a" style="left:628.6px;top:286px;width:662.6px;height:30px;background:#ffffff;"></div>
<div class="t" style="left:637.7px;top:294px;font-size:12px;line-height:14px;color:#999;letter-spacing:-0.058px;">Object Properties: light</div>
<svg class="a" style="left:1270px;top:294px" width="12" height="12" viewBox="0 0 12 12"><path d="M1 1L11 11M11 1L1 11" stroke="#6e6e6e" stroke-width="1"/></svg>
<div class="a" style="left:635px;top:343.5px;width:650px;height:405px;box-shadow:inset 1px 1px 0 #fff, inset -1px -1px 0 #696969, inset -2px -2px 0 #a0a0a0"></div>
<div class="a" style="left:696.5px;top:326px;width:47px;height:18px;background:#f0f0f0;border-radius:2px 2px 0 0;box-shadow:inset 1px 1px 0 #fff, inset -1px 0 0 #696969, inset -2px 0 0 #a0a0a0"></div>
<div class="a" style="left:743.5px;top:326px;width:42px;height:18px;background:#f0f0f0;border-radius:2px 2px 0 0;box-shadow:inset 1px 1px 0 #fff, inset -1px 0 0 #696969, inset -2px 0 0 #a0a0a0"></div>
<div class="a" style="left:785.5px;top:326px;width:42px;height:18px;background:#f0f0f0;border-radius:2px 2px 0 0;box-shadow:inset 1px 1px 0 #fff, inset -1px 0 0 #696969, inset -2px 0 0 #a0a0a0"></div>
<div class="a" style="left:827.5px;top:326px;width:55px;height:18px;background:#f0f0f0;border-radius:2px 2px 0 0;box-shadow:inset 1px 1px 0 #fff, inset -1px 0 0 #696969, inset -2px 0 0 #a0a0a0"></div>
<div class="a" style="left:636px;top:324px;width:61px;height:21px;background:#f0f0f0;border-radius:2px 2px 0 0;box-shadow:inset 1px 1px 0 #fff, inset -1px 0 0 #696969, inset -2px 0 0 #a0a0a0"></div>
<div class="a" style="left:637px;top:343px;width:58px;height:2.5px;background:#f0f0f0;"></div>
<div class="t" style="left:642.3px;top:326px;font-size:12px;line-height:14px;color:#000;transform:scaleX(0.8622);transform-origin:0 0;-webkit-text-stroke:0.3px;">Class Info</div>
<div class="t" style="left:700.5px;top:328px;font-size:12px;line-height:14px;color:#000;transform:scaleX(0.8805);transform-origin:0 0;-webkit-text-stroke:0.3px;">Outputs</div>
<div class="t" style="left:750px;top:328px;font-size:12px;line-height:14px;color:#000;transform:scaleX(0.8719);transform-origin:0 0;-webkit-text-stroke:0.3px;">Inputs</div>
<div class="t" style="left:792px;top:328px;font-size:12px;line-height:14px;color:#000;transform:scaleX(0.8350);transform-origin:0 0;-webkit-text-stroke:0.3px;">Flags</div>
<div class="t" style="left:834px;top:328px;font-size:12px;line-height:14px;color:#000;transform:scaleX(0.8534);transform-origin:0 0;-webkit-text-stroke:0.3px;">VisGroup</div>
<div class="t" style="left:647.8px;top:350px;font-size:12px;line-height:14px;color:#000;transform:scaleX(0.8249);transform-origin:0 0;-webkit-text-stroke:0.3px;">Class:</div>
<div class="a sunk" style="left:648px;top:367px;width:174px;height:22px;background:#fff"></div>
<div class="a btn" style="left:804px;top:369px;width:16px;height:18px"></div>
<svg class="a" style="left:808px;top:376px" width="8" height="5" viewBox="0 0 8 5" shape-rendering="crispEdges"><path d="M0 0H7L3.5 4Z" fill="#000"/></svg>
<div class="t" style="left:650.5px;top:369px;font-size:12px;line-height:14px;color:#000;transform:scaleX(0.8631);transform-origin:0 0;-webkit-text-stroke:0.3px;">light</div>
<div class="t" style="left:648px;top:395px;font-size:12px;line-height:14px;color:#000;transform:scaleX(0.8774);transform-origin:0 0;-webkit-text-stroke:0.3px;">Keyvalues:</div>
<div class="a btn" style="left:749px;top:393px;width:35.5px;height:14.5px"></div>
<div class="t" style="left:755.5px;top:393px;font-size:12px;line-height:14px;color:#000;transform:scaleX(0.8877);transform-origin:0 0;-webkit-text-stroke:0.3px;">copy</div>
<div class="a btn" style="left:786px;top:393px;width:35.5px;height:14.5px"></div>
<div class="t" style="left:790.75px;top:393px;font-size:12px;line-height:14px;color:#000;transform:scaleX(0.8858);transform-origin:0 0;-webkit-text-stroke:0.3px;">paste</div>
<div class="a btnp" style="left:1041px;top:365px;width:55.5px;height:22px"></div>
<div class="t" style="left:1046.75px;top:368.8px;font-size:12px;line-height:14px;color:#000;transform:scaleX(0.8352);transform-origin:0 0;-webkit-text-stroke:0.3px;">SmartEdit</div>
<div class="a btn" style="left:1103px;top:365px;width:53.5px;height:22px"></div>
<div class="t" style="left:1119px;top:368.8px;font-size:12px;line-height:14px;color:#000;transform:scaleX(0.8712);transform-origin:0 0;-webkit-text-stroke:0.3px;">Help</div>
<div class="t" style="left:1167.2px;top:350px;font-size:12px;line-height:14px;color:#000;transform:scaleX(0.8745);transform-origin:0 0;-webkit-text-stroke:0.3px;">Angles:</div>
<div class="a sunk" style="left:1167px;top:368.5px;width:55px;height:19px;background:#f0f0f0"></div>
<div class="a btn" style="left:1204px;top:370.5px;width:16px;height:15px"></div>
<svg class="a" style="left:1208px;top:376px" width="8" height="5" viewBox="0 0 8 5" shape-rendering="crispEdges"><path d="M0 0H7L3.5 4Z" fill="#a0a0a0"/></svg>
<div class="t" style="left:1170px;top:371px;font-size:12px;line-height:14px;color:#6d6d6d;transform:scaleX(0.875);transform-origin:0 0;-webkit-text-stroke:0.3px">0</div>
<svg class="a" style="left:1224px;top:348px" width="44" height="44" viewBox="0 0 44 44"><circle cx="22" cy="21.5" r="18" fill="none" stroke="#fff" stroke-width="1.6"/><path d="M7.5 32A18 18 0 0 1 30 5.3" fill="none" stroke="#a8a8a8" stroke-width="1.4"/><rect x="21.5" y="21" width="1" height="1" fill="#fff"/></svg>
<div class="a sunk" style="left:651px;top:424px;width:373px;height:307px;background:#fff"></div>
<div class="a" style="left:653px;top:426px;width:198px;height:16px;background:#f0f0f0;box-shadow:inset 1px 1px 0 #fff, inset -1px -1px 0 #696969, inset -2px -2px 0 #a0a0a0"></div>
<div class="a" style="left:851px;top:426px;width:150px;height:16px;background:#f0f0f0;box-shadow:inset 1px 1px 0 #fff, inset -1px -1px 0 #696969, inset -2px -2px 0 #a0a0a0"></div>
<div class="a" style="left:1001px;top:426px;width:21px;height:16px;background:#f0f0f0;box-shadow:inset 1px 1px 0 #fff, inset -1px -1px 0 #696969, inset -2px -2px 0 #a0a0a0"></div>
<div class="t" style="left:657.8px;top:426.8px;font-size:12px;line-height:14px;color:#000;transform:scaleX(0.8588);transform-origin:0 0;-webkit-text-stroke:0.3px;">Property Name</div>
<div class="t" style="left:858px;top:426.8px;font-size:12px;line-height:14px;color:#000;transform:scaleX(0.8893);transform-origin:0 0;-webkit-text-stroke:0.3px;">Value</div>
<div class="a" style="left:653px;top:457px;width:369px;height:1px;background:#ececec;"></div>
<div class="a" style="left:653px;top:471px;width:369px;height:1px;background:#ececec;"></div>
<div class="a" style="left:653px;top:485px;width:369px;height:1px;background:#ececec;"></div>
<div class="a" style="left:653px;top:499px;width:369px;height:1px;background:#ececec;"></div>
<div class="a" style="left:653px;top:513px;width:369px;height:1px;background:#ececec;"></div>
<div class="a" style="left:653px;top:527px;width:369px;height:1px;background:#ececec;"></div>
<div class="a" style="left:653px;top:541px;width:369px;height:1px;background:#ececec;"></div>
<div class="a" style="left:653px;top:555px;width:369px;height:1px;background:#ececec;"></div>
<div class="a" style="left:653px;top:569px;width:369px;height:1px;background:#ececec;"></div>
<div class="a" style="left:653px;top:583px;width:369px;height:1px;background:#ececec;"></div>
<div class="a" style="left:653px;top:597px;width:369px;height:1px;background:#ececec;"></div>
<div class="a" style="left:653px;top:611px;width:369px;height:1px;background:#ececec;"></div>
<div class="a" style="left:653px;top:625px;width:369px;height:1px;background:#ececec;"></div>
<div class="a" style="left:653px;top:639px;width:369px;height:1px;background:#ececec;"></div>
<div class="a" style="left:653px;top:653px;width:369px;height:1px;background:#ececec;"></div>
<div class="a" style="left:653px;top:667px;width:369px;height:1px;background:#ececec;"></div>
<div class="a" style="left:653px;top:681px;width:369px;height:1px;background:#ececec;"></div>
<div class="a" style="left:653px;top:695px;width:369px;height:1px;background:#ececec;"></div>
<div class="a" style="left:653px;top:709px;width:369px;height:1px;background:#ececec;"></div>
<div class="a" style="left:653px;top:723px;width:369px;height:1px;background:#ececec;"></div>
<div class="a" style="left:852px;top:441px;width:1px;height:288px;background:#ececec;"></div>
<div class="a" style="left:1001px;top:441px;width:1px;height:288px;background:#ececec;"></div>
<div class="t" style="left:654.6px;top:443.5px;font-size:12px;line-height:14px;color:#000;transform:scaleX(0.8933);transform-origin:0 0;-webkit-text-stroke:0.3px;">0 percent falloff distance</div>
<div class="t" style="left:855.3px;top:443.5px;font-size:12px;line-height:14px;color:#000;transform:scaleX(0.875);transform-origin:0 0;-webkit-text-stroke:0.3px">0</div>
<div class="t" style="left:654.6px;top:457.5px;font-size:12px;line-height:14px;color:#000;transform:scaleX(0.8900);transform-origin:0 0;-webkit-text-stroke:0.3px;">50 percent falloff distance</div>
<div class="t" style="left:855.3px;top:457.5px;font-size:12px;line-height:14px;color:#000;transform:scaleX(0.875);transform-origin:0 0;-webkit-text-stroke:0.3px">0</div>
<div class="t" style="left:654.6px;top:471.5px;font-size:12px;line-height:14px;color:#000;transform:scaleX(0.8808);transform-origin:0 0;-webkit-text-stroke:0.3px;">Appearance</div>
<div class="t" style="left:855.3px;top:471.5px;font-size:12px;line-height:14px;color:#000;transform:scaleX(0.8750);transform-origin:0 0;-webkit-text-stroke:0.3px;">Normal</div>
<div class="t" style="left:654.6px;top:485.5px;font-size:12px;line-height:14px;color:#000;transform:scaleX(0.8555);transform-origin:0 0;-webkit-text-stroke:0.3px;">Brightness</div>
<div class="t" style="left:654.6px;top:499.5px;font-size:12px;line-height:14px;color:#000;transform:scaleX(0.8707);transform-origin:0 0;-webkit-text-stroke:0.3px;">BrightnessHDR</div>
<div class="a" style="left:653.5px;top:513.5px;width:349px;height:14.5px;background:#e6e6f7;"></div>
<div class="a" style="left:653.5px;top:513.5px;width:347px;height:12.5px;border:1px dotted #222"></div>
<div class="t" style="left:654.6px;top:513.5px;font-size:12px;line-height:14px;color:#000;transform:scaleX(0.8890);transform-origin:0 0;-webkit-text-stroke:0.3px;">BrightnessScaleHDR</div>
<div class="t" style="left:855.3px;top:513.5px;font-size:12px;line-height:14px;color:#000;transform:scaleX(0.8750);transform-origin:0 0;-webkit-text-stroke:0.3px;">100</div>
<div class="t" style="left:654.6px;top:527.5px;font-size:12px;line-height:14px;color:#000;transform:scaleX(0.8849);transform-origin:0 0;-webkit-text-stroke:0.3px;">Constant</div>
<div class="t" style="left:855.3px;top:527.5px;font-size:12px;line-height:14px;color:#000;transform:scaleX(0.875);transform-origin:0 0;-webkit-text-stroke:0.3px">0</div>
<div class="t" style="left:654.6px;top:541.5px;font-size:12px;line-height:14px;color:#000;transform:scaleX(0.8784);transform-origin:0 0;-webkit-text-stroke:0.3px;">Custom Appearance</div>
<div class="t" style="left:654.6px;top:555.5px;font-size:12px;line-height:14px;color:#000;transform:scaleX(0.8641);transform-origin:0 0;-webkit-text-stroke:0.3px;">Entity Scripts</div>
<div class="t" style="left:654.6px;top:569.5px;font-size:12px;line-height:14px;color:#000;transform:scaleX(0.8951);transform-origin:0 0;-webkit-text-stroke:0.3px;">Entity To Point At</div>
<div class="t" style="left:654.6px;top:583.5px;font-size:12px;line-height:14px;color:#000;transform:scaleX(0.8600);transform-origin:0 0;-webkit-text-stroke:0.3px;">hard falloff</div>
<div class="t" style="left:855.3px;top:583.5px;font-size:12px;line-height:14px;color:#000;transform:scaleX(0.875);transform-origin:0 0;-webkit-text-stroke:0.3px">0</div>
<div class="t" style="left:654.6px;top:597.5px;font-size:12px;line-height:14px;color:#000;transform:scaleX(0.8695);transform-origin:0 0;-webkit-text-stroke:0.3px;">Linear</div>
<div class="t" style="left:855.3px;top:597.5px;font-size:12px;line-height:14px;color:#000;transform:scaleX(0.875);transform-origin:0 0;-webkit-text-stroke:0.3px">0</div>
<div class="t" style="left:654.6px;top:611.5px;font-size:12px;line-height:14px;color:#000;transform:scaleX(0.8675);transform-origin:0 0;-webkit-text-stroke:0.3px;">Maximum Distance</div>
<div class="t" style="left:855.3px;top:611.5px;font-size:12px;line-height:14px;color:#000;transform:scaleX(0.875);transform-origin:0 0;-webkit-text-stroke:0.3px">0</div>
<div class="t" style="left:654.6px;top:625.5px;font-size:12px;line-height:14px;color:#000;transform:scaleX(0.8592);transform-origin:0 0;-webkit-text-stroke:0.3px;">Name</div>
<div class="t" style="left:654.6px;top:639.5px;font-size:12px;line-height:14px;color:#000;transform:scaleX(0.8746);transform-origin:0 0;-webkit-text-stroke:0.3px;">Quadratic</div>
<div class="t" style="left:855.3px;top:639.5px;font-size:12px;line-height:14px;color:#000;transform:scaleX(0.875);transform-origin:0 0;-webkit-text-stroke:0.3px">1</div>
<div class="t" style="left:654.6px;top:653.5px;font-size:12px;line-height:14px;color:#000;transform:scaleX(0.8929);transform-origin:0 0;-webkit-text-stroke:0.3px;">Script think function</div>
<div class="a" style="left:858px;top:488.5px;width:138px;height:8.5px;background:#fff;border:1px solid #222;box-sizing:border-box"></div>
<div class="a" style="left:858px;top:502.5px;width:138px;height:8.5px;background:#fff;border:1px solid #222;box-sizing:border-box"></div>
<div class="a" style="left:648px;top:508px;width:363px;height:25.5px;border:5.5px solid #fcc41c;border-left-width:6px;box-sizing:border-box"></div>
<div class="a" style="left:1030.3px;top:419px;width:235.5px;height:33.7px;border:6px solid #fcc41c;box-sizing:border-box;background:#f0f0f0"></div>
<div class="a sunk" style="left:1036.5px;top:425px;width:223.5px;height:21px;background:#fff"></div>
<div class="t" style="left:1040px;top:427px;font-size:12px;line-height:14px;color:#000;transform:scaleX(0.8742);transform-origin:0 0;-webkit-text-stroke:0.3px;">100</div>
<div class="t" style="left:1044px;top:493px;font-size:12px;line-height:14px;color:#000;transform:scaleX(0.8307);transform-origin:0 0;-webkit-text-stroke:0.3px;">Help</div>
<div class="a sunk" style="left:1046px;top:511.5px;width:226px;height:118px;background:#f0f0f0"></div>
<div class="t" style="left:1049px;top:513.8px;font-size:12px;line-height:14px;color:#000;transform:scaleX(0.8812);transform-origin:0 0;-webkit-text-stroke:0.3px;">Amount to scale the light by when compiling for</div>
<div class="t" style="left:1049px;top:526.8px;font-size:12px;line-height:14px;color:#000;transform:scaleX(0.8864);transform-origin:0 0;-webkit-text-stroke:0.3px;">HDR.</div>
<div class="t" style="left:1043.6px;top:641.8px;font-size:12px;line-height:14px;color:#000;transform:scaleX(0.8274);transform-origin:0 0;-webkit-text-stroke:0.3px;">Comments</div>
<div class="a sunk" style="left:1044px;top:657.5px;width:226.5px;height:73.5px;background:#fff"></div>
<div class="a btn" style="left:1129.5px;top:755px;width:74px;height:22px"></div>
<div class="t" style="left:1146.75px;top:759px;font-size:12px;line-height:14px;color:#000;letter-spacing:-0.592px;">Отмена</div>
<div class="a btn" style="left:1210px;top:755px;width:74.5px;height:22px"></div>
<div class="t" style="left:1218.75px;top:759px;font-size:12px;line-height:14px;color:#000;letter-spacing:-0.556px;">Применить</div>
</body></html>
